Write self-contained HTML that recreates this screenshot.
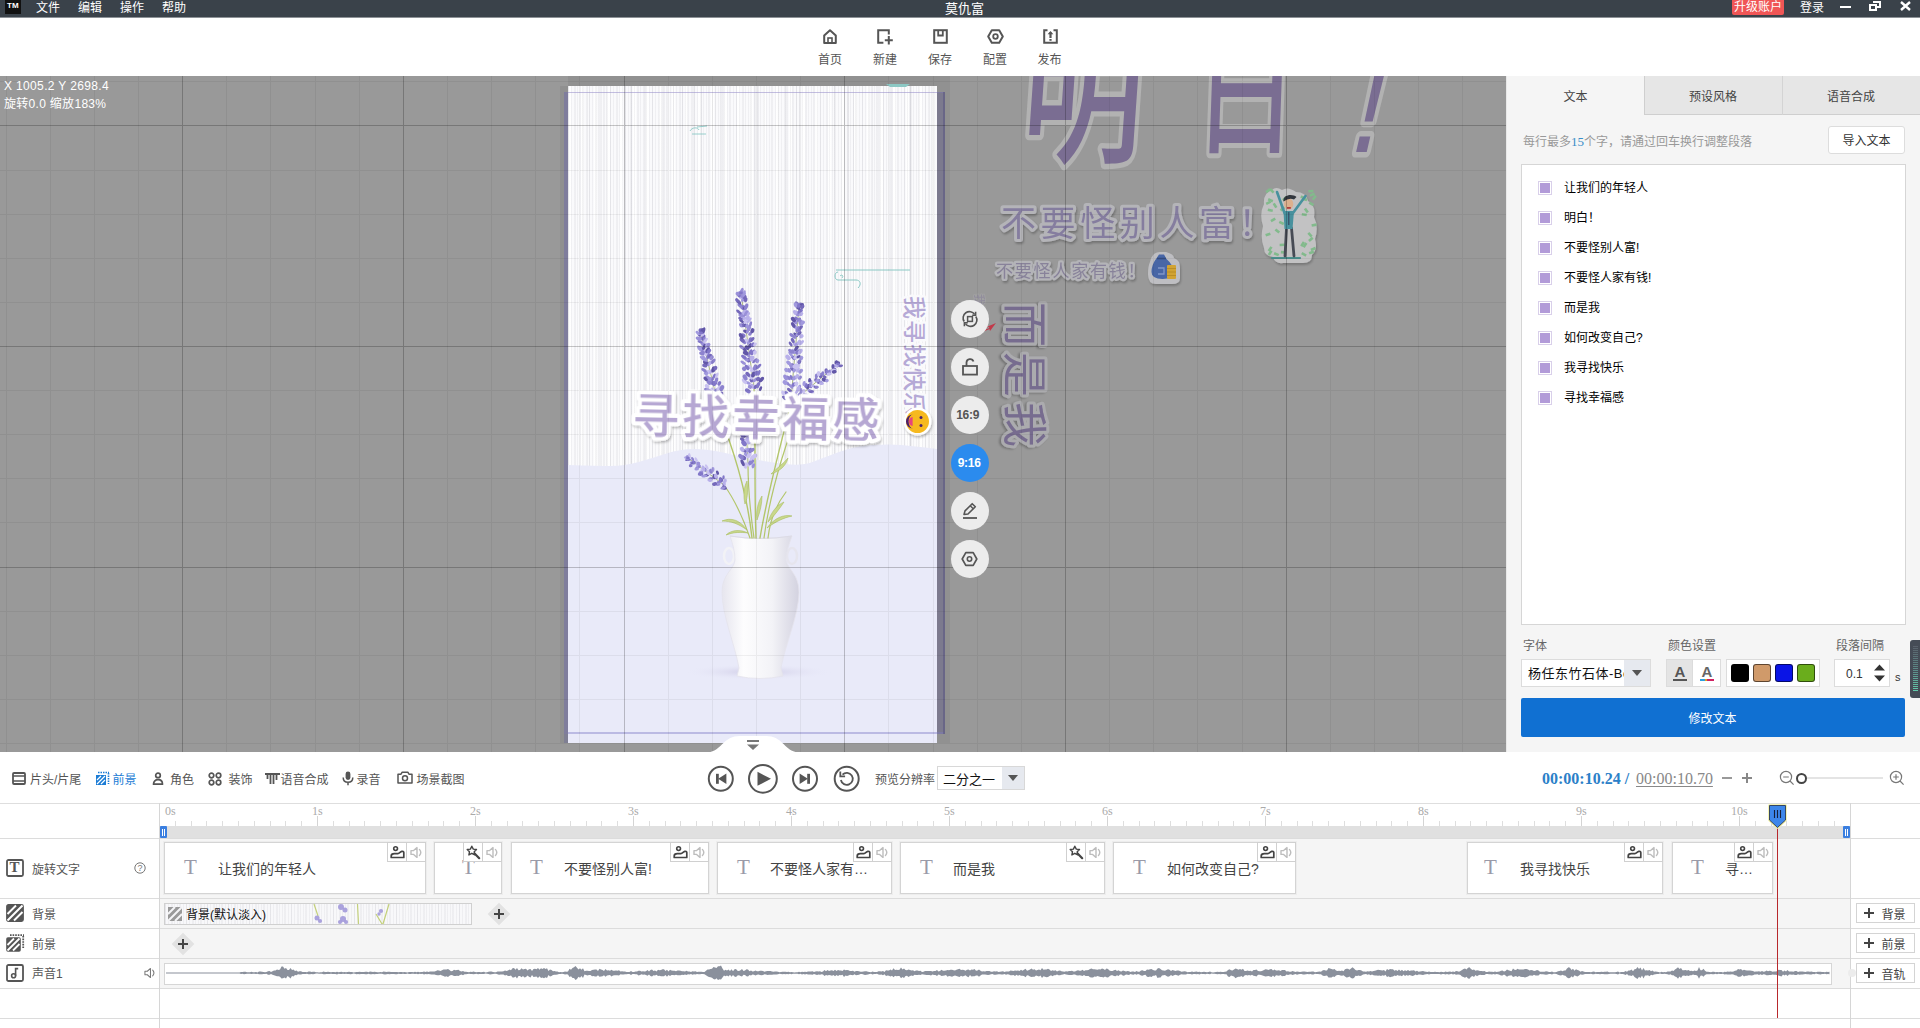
<!DOCTYPE html><html lang="zh"><head><meta charset="utf-8"><title>莫仇富</title><style>
*{box-sizing:border-box;margin:0;padding:0}
html,body{width:1920px;height:1028px;overflow:hidden;background:#fff}
body{position:relative;font-family:"Liberation Sans","Noto Sans CJK SC",sans-serif;font-size:12px;color:#555;line-height:1}
.abs{position:absolute}
.t{position:absolute;white-space:nowrap;line-height:1;margin-top:1px}
.t.serif,.t.lat{margin-top:0}
svg{position:absolute;overflow:visible}
#titlebar{position:absolute;left:0;top:0;width:1920px;height:18px;background:#3a424a;color:#fff;border-bottom:1px solid #8d9297}
#toolbar{position:absolute;left:0;top:17px;width:1920px;height:59px;background:linear-gradient(180deg,#8d9297 0 1px,#fff 1px)}
#canvas{position:absolute;left:0;top:76px;width:1506px;height:676px;background:#999;overflow:hidden}
#panel{position:absolute;left:1506px;top:76px;width:414px;height:676px;background:#f5f5f5}
#timeline{position:absolute;left:0;top:752px;width:1920px;height:276px;background:#fff}
.serif{font-family:"Liberation Serif","Noto Serif CJK SC",serif}
</style></head><body><div id="titlebar"><div class="abs" style="left:5px;top:0;width:16px;height:14px;background:#111"></div><div class="t lat" style="left:7px;top:2px;font-size:8px;font-weight:bold;color:#fff;letter-spacing:0">TM</div><div class="t" style="left:36px;top:1px;font-size:12px;color:#fff">文件</div><div class="t" style="left:78px;top:1px;font-size:12px;color:#fff">编辑</div><div class="t" style="left:120px;top:1px;font-size:12px;color:#fff">操作</div><div class="t" style="left:162px;top:1px;font-size:12px;color:#fff">帮助</div><div class="t" style="left:945px;top:1px;font-size:13px;color:#fff">莫仇富</div><div class="abs" style="left:1732px;top:0;width:52px;height:15px;background:#f05656;border-radius:0 0 2px 2px"></div><div class="t" style="left:1734px;top:0px;font-size:12px;color:#fff">升级账户</div><div class="t" style="left:1800px;top:1px;font-size:12px;color:#fff">登录</div><div class="abs" style="left:1840px;top:6px;width:11px;height:2px;background:#fff"></div><svg style="left:1869px;top:1px" width="12" height="10" viewBox="0 0 12 10"><path d="M4 1h7v5h-3" fill="none" stroke="#fff" stroke-width="2"/><rect x="1" y="4" width="6" height="5" fill="#3a424a" stroke="#fff" stroke-width="2"/></svg><svg style="left:1900px;top:1px" width="11" height="10" viewBox="0 0 11 10"><path d="M1 1l9 8M10 1l-9 8" stroke="#fff" stroke-width="2.4" fill="none"/></svg></div><div id="toolbar"><svg style="left:823px;top:12px" width="14" height="15" viewBox="0 0 14 15"><path d="M1.2 6.6L7 1.3l5.8 5.3V14H1.2z" fill="none" stroke="#555" stroke-width="2" stroke-linejoin="round"/><rect x="5" y="9" width="4" height="5" fill="none" stroke="#555" stroke-width="1.6"/></svg><svg style="left:877px;top:12px" width="16" height="15" viewBox="0 0 16 15"><path d="M6.4 13.8H1.2V1.2h10.6v4.2" fill="none" stroke="#555" stroke-width="2"/><path d="M11.8 7v8.4M7.8 11.2h8" stroke="#555" stroke-width="2" fill="none"/></svg><svg style="left:933px;top:12px" width="15" height="15" viewBox="0 0 15 15"><rect x="1.2" y="1.2" width="12.6" height="12.6" fill="none" stroke="#555" stroke-width="2"/><path d="M5.2 1.5v5h4.6v-5" fill="none" stroke="#555" stroke-width="1.8"/></svg><svg style="left:987px;top:12px" width="17" height="15" viewBox="0 0 17 15"><path d="M4.8 1.2h7.4l3.6 6.3-3.6 6.3H4.8L1.2 7.5z" fill="none" stroke="#555" stroke-width="2" stroke-linejoin="round"/><circle cx="8.5" cy="7.5" r="2.3" fill="none" stroke="#555" stroke-width="1.8"/></svg><svg style="left:1043px;top:12px" width="15" height="15" viewBox="0 0 15 15"><path d="M4.5 1.2H1.2v12.6h12.6V1.2h-3.3" fill="none" stroke="#555" stroke-width="2"/><path d="M7.5 9V3.2" stroke="#555" stroke-width="2.2"/><path d="M4.6 5.2L7.5 2l2.9 3.2z" fill="#555"/><rect x="6.4" y="10" width="2.2" height="1.8" fill="#555"/></svg><div class="t" style="left:818px;top:36px;font-size:12px;color:#555">首页</div><div class="t" style="left:873px;top:36px;font-size:12px;color:#555">新建</div><div class="t" style="left:928px;top:36px;font-size:12px;color:#555">保存</div><div class="t" style="left:983px;top:36px;font-size:12px;color:#555">配置</div><div class="t" style="left:1037.5px;top:36px;font-size:12px;color:#555">发布</div></div><div id="canvas"><div class="abs" style="left:560px;top:10px;width:8px;height:657px;background:rgba(0,0,0,0.06)"></div><div class="abs" style="left:568px;top:0;width:382px;height:10px;background:rgba(0,0,0,0.05)"></div><div class="abs" style="left:937px;top:10px;width:13px;height:657px;background:rgba(0,0,0,0.05)"></div><div class="abs" style="left:568px;top:10px;width:369px;height:657px;overflow:hidden;background-color:#fafafc;background-image:repeating-linear-gradient(90deg,rgba(60,60,80,0.055) 0 1px,transparent 1px 3px),repeating-linear-gradient(90deg,rgba(60,60,80,0.06) 0 1px,transparent 1px 7px),repeating-linear-gradient(90deg,rgba(255,255,255,0.9) 0 3px,transparent 3px 13px),repeating-linear-gradient(90deg,rgba(60,60,80,0.07) 0 1px,transparent 1px 19px),repeating-linear-gradient(90deg,rgba(60,60,80,0.05) 0 2px,transparent 2px 31px)"><svg style="left:0;top:0" width="369" height="657" viewBox="0 0 369 657"><path d="M0 379 Q30 380 43.0 380.0 Q56 380 70.5 376.0 Q85 372 98.5 367.5 Q112 363 126.0 363.0 Q140 363 155.0 366.5 Q170 370 185.0 373.0 Q200 376 217.0 378.0 Q234 380 244.5 376.0 Q255 372 271.0 366.0 Q287 360 304.5 359.0 Q322 358 333.5 359.0 Q345 360 357.0 361.5 L369 363 V657 H0Z" fill="#e9eaf9"/></svg></div><div class="abs" style="left:564px;top:16px;width:4px;height:642px;background:#7f7d9c"></div><div class="abs" style="left:568px;top:16px;width:376px;height:1px;background:rgba(150,140,200,0.55)"></div><div class="abs" style="left:568px;top:656px;width:376px;height:2px;background:rgba(150,145,210,0.55)"></div><div class="abs" style="left:937px;top:16px;width:8px;height:642px;background:rgba(100,95,140,0.45)"></div><div class="abs" style="left:943px;top:16px;width:2px;height:642px;background:rgba(90,85,130,0.55)"></div><div class="abs" style="left:564px;top:658px;width:4px;height:9px;background:rgba(110,110,150,0.5)"></div><svg style="left:0;top:0" width="1506" height="676" viewBox="0 76 1506 676"><defs><linearGradient id="vg" x1="0" x2="1" y1="0" y2="0"><stop offset="0" stop-color="#e6e5ee"/><stop offset="0.28" stop-color="#fdfdfe"/><stop offset="0.65" stop-color="#f3f3f7"/><stop offset="1" stop-color="#d3d2e0"/></linearGradient><radialGradient id="sh" cx="0.5" cy="0.5" r="0.5"><stop offset="0" stop-color="#c9c5e2" stop-opacity="0.9"/><stop offset="1" stop-color="#e9eaf9" stop-opacity="0"/></radialGradient></defs><ellipse cx="758" cy="672" rx="75" ry="8" fill="url(#sh)"/><ellipse cx="729" cy="556" rx="5" ry="8" fill="none" stroke="#f2f2f6" stroke-width="2.5"/><ellipse cx="792" cy="556" rx="5" ry="8" fill="none" stroke="#e6e5ee" stroke-width="2.5"/><path d="M730 536 Q760 541 792 536 C789 545 786 552 786 560 C788 570 799 574 799 592 C799 615 785 645 781 668 L783 676 Q760 681 737 676 L739 668 C735 645 722 615 722 592 C722 574 734 570 735 560 C735 552 733 545 730 536Z" fill="url(#vg)" stroke="#e4e3ec" stroke-width="0.8"/><path d="M730 536 Q760 541 792 536" fill="none" stroke="#dcdbe6" stroke-width="1"/></svg><svg style="left:0;top:0" width="1506" height="676" viewBox="0 76 1506 676"><path d="M752 538 C748 500 735 450 712 396" stroke="#b3c66a" stroke-width="1.4" fill="none" stroke-linecap="round"/><path d="M756 538 C754 480 756 430 754 388" stroke="#b3c66a" stroke-width="1.4" fill="none" stroke-linecap="round"/><path d="M760 538 C768 490 782 440 792 400" stroke="#b3c66a" stroke-width="1.4" fill="none" stroke-linecap="round"/><path d="M764 538 C770 490 790 430 804 394" stroke="#b3c66a" stroke-width="1.2" fill="none" stroke-linecap="round"/><path d="M754 538 C750 510 748 490 748 464" stroke="#b3c66a" stroke-width="1.2" fill="none" stroke-linecap="round"/><path d="M750 538 C742 515 735 500 724 485" stroke="#b3c66a" stroke-width="1.2" fill="none" stroke-linecap="round"/><path d="M768 538 C770 520 776 505 786 492" stroke="#b3c66a" stroke-width="1.2" fill="none" stroke-linecap="round"/><path d="M747 530 C740 520 731 517 722 521 C731 521 739 524 747 530Z" fill="#c9d88c" stroke="#a9bd62" stroke-width="0.6"/><path d="M748 533 C740 529 731 530 726 535 C734 532 741 532 748 533Z" fill="#c9d88c" stroke="#a9bd62" stroke-width="0.6"/><path d="M767 528 C774 518 784 514 792 516 C783 518 775 522 767 528Z" fill="#c9d88c" stroke="#a9bd62" stroke-width="0.6"/><path d="M768 522 C771 512 777 505 784 502 C780 508 775 515 768 522Z" fill="#c9d88c" stroke="#a9bd62" stroke-width="0.6"/><path d="M771 474 C777 468 783 464 788 458 C786 466 780 471 771 474Z" fill="#c9d88c" stroke="#a9bd62" stroke-width="0.6"/><path d="M745 504 C743 495 744 487 747 481 C748 489 748 497 745 504Z" fill="#c9d88c" stroke="#a9bd62" stroke-width="0.6"/><path d="M757 520 C756 510 758 502 762 496 C762 504 760 512 757 520Z" fill="#c9d88c" stroke="#a9bd62" stroke-width="0.6"/><path d="M716.0 396.0L701.0 333.0" stroke="#9aa96a" stroke-width="0.8" fill="none"/><ellipse cx="715.0" cy="398.0" rx="3.0" ry="1.4" fill="#b8b0ea" transform="rotate(-145 715.0 398.0)"/><ellipse cx="712.5" cy="394.8" rx="2.4" ry="1.4" fill="#6257a8" transform="rotate(-140 712.5 394.8)"/><ellipse cx="710.9" cy="397.7" rx="3.2" ry="1.5" fill="#7569bb" transform="rotate(-132 710.9 397.7)"/><ellipse cx="717.1" cy="396.2" rx="3.4" ry="1.4" fill="#8277c9" transform="rotate(-49 717.1 396.2)"/><ellipse cx="719.5" cy="395.0" rx="2.9" ry="1.8" fill="#8d83cf" transform="rotate(-56 719.5 395.0)"/><ellipse cx="721.5" cy="394.0" rx="2.6" ry="1.8" fill="#7569bb" transform="rotate(-81 721.5 394.0)"/><ellipse cx="712.8" cy="390.1" rx="2.8" ry="2.0" fill="#c9c2f0" transform="rotate(-142 712.8 390.1)"/><ellipse cx="710.2" cy="392.0" rx="2.4" ry="2.0" fill="#8277c9" transform="rotate(-127 710.2 392.0)"/><ellipse cx="707.1" cy="389.6" rx="3.1" ry="1.6" fill="#8d83cf" transform="rotate(-163 707.1 389.6)"/><ellipse cx="716.0" cy="391.0" rx="2.6" ry="2.1" fill="#8d83cf" transform="rotate(-67 716.0 391.0)"/><ellipse cx="718.7" cy="388.3" rx="3.3" ry="1.6" fill="#c9c2f0" transform="rotate(-56 718.7 388.3)"/><ellipse cx="721.8" cy="388.2" rx="3.2" ry="2.1" fill="#8d83cf" transform="rotate(-64 721.8 388.2)"/><ellipse cx="712.3" cy="382.7" rx="3.0" ry="2.2" fill="#8277c9" transform="rotate(-156 712.3 382.7)"/><ellipse cx="709.1" cy="382.4" rx="2.6" ry="2.1" fill="#8d83cf" transform="rotate(-138 709.1 382.4)"/><ellipse cx="707.0" cy="386.2" rx="2.5" ry="1.9" fill="#c9c2f0" transform="rotate(-139 707.0 386.2)"/><ellipse cx="714.7" cy="383.4" rx="2.9" ry="2.1" fill="#8277c9" transform="rotate(-51 714.7 383.4)"/><ellipse cx="716.4" cy="380.2" rx="3.0" ry="1.7" fill="#8d83cf" transform="rotate(-74 716.4 380.2)"/><ellipse cx="719.3" cy="383.3" rx="2.5" ry="1.7" fill="#8277c9" transform="rotate(-60 719.3 383.3)"/><ellipse cx="710.5" cy="379.1" rx="2.8" ry="1.8" fill="#a199de" transform="rotate(-136 710.5 379.1)"/><ellipse cx="707.7" cy="377.9" rx="2.9" ry="1.9" fill="#9a90d8" transform="rotate(-126 707.7 377.9)"/><ellipse cx="705.7" cy="379.0" rx="2.8" ry="1.7" fill="#6257a8" transform="rotate(-131 705.7 379.0)"/><ellipse cx="712.8" cy="378.7" rx="2.9" ry="1.4" fill="#8d83cf" transform="rotate(-61 712.8 378.7)"/><ellipse cx="714.5" cy="375.7" rx="2.2" ry="1.5" fill="#8277c9" transform="rotate(-68 714.5 375.7)"/><ellipse cx="716.9" cy="375.2" rx="2.8" ry="1.4" fill="#c9c2f0" transform="rotate(-64 716.9 375.2)"/><ellipse cx="708.8" cy="372.0" rx="2.3" ry="2.0" fill="#c9c2f0" transform="rotate(-153 708.8 372.0)"/><ellipse cx="706.1" cy="373.3" rx="2.2" ry="2.1" fill="#a199de" transform="rotate(-145 706.1 373.3)"/><ellipse cx="704.0" cy="370.2" rx="3.1" ry="1.6" fill="#8d83cf" transform="rotate(-149 704.0 370.2)"/><ellipse cx="711.0" cy="371.7" rx="2.6" ry="1.5" fill="#b8b0ea" transform="rotate(-53 711.0 371.7)"/><ellipse cx="713.4" cy="369.4" rx="3.2" ry="2.0" fill="#6257a8" transform="rotate(-76 713.4 369.4)"/><ellipse cx="715.5" cy="368.2" rx="2.4" ry="1.8" fill="#7569bb" transform="rotate(-69 715.5 368.2)"/><ellipse cx="707.0" cy="363.3" rx="2.8" ry="1.5" fill="#b8b0ea" transform="rotate(-148 707.0 363.3)"/><ellipse cx="706.0" cy="363.0" rx="3.4" ry="2.1" fill="#6257a8" transform="rotate(-138 706.0 363.0)"/><ellipse cx="704.7" cy="365.7" rx="2.6" ry="1.7" fill="#7569bb" transform="rotate(-163 704.7 365.7)"/><ellipse cx="709.4" cy="363.5" rx="3.2" ry="1.4" fill="#9a90d8" transform="rotate(-57 709.4 363.5)"/><ellipse cx="710.7" cy="362.7" rx="2.8" ry="1.5" fill="#b8b0ea" transform="rotate(-52 710.7 362.7)"/><ellipse cx="713.2" cy="361.3" rx="3.1" ry="1.7" fill="#8d83cf" transform="rotate(-54 713.2 361.3)"/><ellipse cx="705.7" cy="360.1" rx="2.3" ry="1.5" fill="#a199de" transform="rotate(-160 705.7 360.1)"/><ellipse cx="703.8" cy="358.5" rx="2.8" ry="2.1" fill="#a199de" transform="rotate(-130 703.8 358.5)"/><ellipse cx="702.5" cy="358.0" rx="3.1" ry="1.4" fill="#a199de" transform="rotate(-153 702.5 358.0)"/><ellipse cx="708.1" cy="356.1" rx="3.2" ry="1.5" fill="#8277c9" transform="rotate(-73 708.1 356.1)"/><ellipse cx="710.1" cy="356.2" rx="2.6" ry="1.8" fill="#7569bb" transform="rotate(-50 710.1 356.2)"/><ellipse cx="711.6" cy="357.7" rx="2.7" ry="1.8" fill="#9a90d8" transform="rotate(-47 711.6 357.7)"/><ellipse cx="704.4" cy="350.2" rx="2.3" ry="1.5" fill="#c9c2f0" transform="rotate(-144 704.4 350.2)"/><ellipse cx="703.0" cy="351.9" rx="3.1" ry="1.5" fill="#8d83cf" transform="rotate(-129 703.0 351.9)"/><ellipse cx="701.8" cy="353.6" rx="2.8" ry="1.8" fill="#8d83cf" transform="rotate(-155 701.8 353.6)"/><ellipse cx="705.8" cy="353.9" rx="2.4" ry="1.4" fill="#c9c2f0" transform="rotate(-79 705.8 353.9)"/><ellipse cx="707.6" cy="350.1" rx="3.3" ry="1.7" fill="#6257a8" transform="rotate(-59 707.6 350.1)"/><ellipse cx="708.9" cy="351.3" rx="2.8" ry="1.7" fill="#8277c9" transform="rotate(-46 708.9 351.3)"/><ellipse cx="702.7" cy="343.9" rx="2.4" ry="1.7" fill="#9a90d8" transform="rotate(-140 702.7 343.9)"/><ellipse cx="701.7" cy="348.2" rx="2.5" ry="1.4" fill="#8d83cf" transform="rotate(-150 701.7 348.2)"/><ellipse cx="699.6" cy="348.2" rx="3.1" ry="1.9" fill="#a199de" transform="rotate(-129 699.6 348.2)"/><ellipse cx="704.3" cy="346.8" rx="3.4" ry="1.7" fill="#6257a8" transform="rotate(-64 704.3 346.8)"/><ellipse cx="706.8" cy="345.4" rx="2.8" ry="1.6" fill="#b8b0ea" transform="rotate(-76 706.8 345.4)"/><ellipse cx="708.4" cy="345.3" rx="2.6" ry="1.7" fill="#9a90d8" transform="rotate(-55 708.4 345.3)"/><ellipse cx="702.0" cy="338.9" rx="2.8" ry="1.4" fill="#6257a8" transform="rotate(-163 702.0 338.9)"/><ellipse cx="699.9" cy="341.7" rx="2.5" ry="1.4" fill="#8277c9" transform="rotate(-155 699.9 341.7)"/><ellipse cx="698.8" cy="338.6" rx="3.2" ry="1.9" fill="#9a90d8" transform="rotate(-161 698.8 338.6)"/><ellipse cx="703.6" cy="337.1" rx="2.9" ry="1.9" fill="#7569bb" transform="rotate(-80 703.6 337.1)"/><ellipse cx="704.2" cy="340.4" rx="3.3" ry="1.6" fill="#8d83cf" transform="rotate(-83 704.2 340.4)"/><ellipse cx="705.5" cy="340.5" rx="3.2" ry="1.4" fill="#c9c2f0" transform="rotate(-49 705.5 340.5)"/><ellipse cx="701.0" cy="330.7" rx="2.7" ry="2.1" fill="#7569bb" transform="rotate(-148 701.0 330.7)"/><ellipse cx="699.4" cy="334.6" rx="2.3" ry="1.5" fill="#6257a8" transform="rotate(-125 699.4 334.6)"/><ellipse cx="697.9" cy="333.0" rx="2.8" ry="1.5" fill="#a199de" transform="rotate(-141 697.9 333.0)"/><ellipse cx="701.8" cy="331.4" rx="3.4" ry="1.4" fill="#6257a8" transform="rotate(-83 701.8 331.4)"/><ellipse cx="702.6" cy="333.9" rx="2.7" ry="1.9" fill="#c9c2f0" transform="rotate(-57 702.6 333.9)"/><ellipse cx="703.6" cy="330.5" rx="3.4" ry="1.6" fill="#6257a8" transform="rotate(-75 703.6 330.5)"/><ellipse cx="701.0" cy="333.0" rx="2.0" ry="1.4" fill="#8277c9"/><path d="M754.0 388.0L741.0 293.0" stroke="#9aa96a" stroke-width="0.8" fill="none"/><ellipse cx="752.8" cy="386.5" rx="3.1" ry="1.9" fill="#b8b0ea" transform="rotate(-134 752.8 386.5)"/><ellipse cx="749.9" cy="386.9" rx="2.2" ry="1.9" fill="#9a90d8" transform="rotate(-153 749.9 386.9)"/><ellipse cx="747.9" cy="390.9" rx="3.2" ry="2.1" fill="#8277c9" transform="rotate(-145 747.9 390.9)"/><ellipse cx="755.3" cy="386.9" rx="2.2" ry="1.5" fill="#7569bb" transform="rotate(-67 755.3 386.9)"/><ellipse cx="758.0" cy="385.2" rx="3.4" ry="1.8" fill="#8277c9" transform="rotate(-68 758.0 385.2)"/><ellipse cx="760.5" cy="388.7" rx="2.6" ry="1.4" fill="#6257a8" transform="rotate(-67 760.5 388.7)"/><ellipse cx="751.5" cy="380.1" rx="2.3" ry="2.0" fill="#7569bb" transform="rotate(-124 751.5 380.1)"/><ellipse cx="748.0" cy="382.9" rx="3.0" ry="1.4" fill="#a199de" transform="rotate(-156 748.0 382.9)"/><ellipse cx="744.4" cy="381.3" rx="3.3" ry="1.7" fill="#c9c2f0" transform="rotate(-131 744.4 381.3)"/><ellipse cx="755.1" cy="379.9" rx="3.0" ry="1.4" fill="#9a90d8" transform="rotate(-44 755.1 379.9)"/><ellipse cx="758.1" cy="379.0" rx="2.3" ry="1.8" fill="#7569bb" transform="rotate(-58 758.1 379.0)"/><ellipse cx="761.4" cy="379.6" rx="3.3" ry="1.9" fill="#6257a8" transform="rotate(-50 761.4 379.6)"/><ellipse cx="751.0" cy="376.9" rx="3.0" ry="2.1" fill="#c9c2f0" transform="rotate(-133 751.0 376.9)"/><ellipse cx="747.8" cy="374.4" rx="2.9" ry="1.9" fill="#7569bb" transform="rotate(-137 747.8 374.4)"/><ellipse cx="745.1" cy="377.5" rx="3.3" ry="2.1" fill="#8d83cf" transform="rotate(-121 745.1 377.5)"/><ellipse cx="753.4" cy="374.4" rx="3.2" ry="2.0" fill="#6257a8" transform="rotate(-68 753.4 374.4)"/><ellipse cx="756.6" cy="373.1" rx="2.7" ry="2.0" fill="#8277c9" transform="rotate(-75 756.6 373.1)"/><ellipse cx="759.0" cy="372.9" rx="3.0" ry="1.4" fill="#8277c9" transform="rotate(-72 759.0 372.9)"/><ellipse cx="749.6" cy="366.9" rx="2.9" ry="1.5" fill="#c9c2f0" transform="rotate(-137 749.6 366.9)"/><ellipse cx="747.1" cy="367.4" rx="3.0" ry="1.9" fill="#8277c9" transform="rotate(-129 747.1 367.4)"/><ellipse cx="744.1" cy="368.8" rx="2.3" ry="2.1" fill="#8d83cf" transform="rotate(-126 744.1 368.8)"/><ellipse cx="752.4" cy="369.8" rx="2.7" ry="2.0" fill="#c9c2f0" transform="rotate(-39 752.4 369.8)"/><ellipse cx="755.2" cy="367.6" rx="3.3" ry="2.1" fill="#8d83cf" transform="rotate(-75 755.2 367.6)"/><ellipse cx="758.6" cy="366.5" rx="3.4" ry="1.5" fill="#8277c9" transform="rotate(-45 758.6 366.5)"/><ellipse cx="748.5" cy="360.1" rx="2.5" ry="2.1" fill="#7569bb" transform="rotate(-137 748.5 360.1)"/><ellipse cx="746.2" cy="359.2" rx="3.0" ry="1.7" fill="#9a90d8" transform="rotate(-147 746.2 359.2)"/><ellipse cx="743.2" cy="362.8" rx="3.2" ry="1.4" fill="#9a90d8" transform="rotate(-148 743.2 362.8)"/><ellipse cx="752.0" cy="358.5" rx="3.1" ry="2.1" fill="#b8b0ea" transform="rotate(-66 752.0 358.5)"/><ellipse cx="754.9" cy="360.8" rx="3.3" ry="1.4" fill="#8277c9" transform="rotate(-41 754.9 360.8)"/><ellipse cx="757.3" cy="361.0" rx="2.2" ry="1.9" fill="#a199de" transform="rotate(-52 757.3 361.0)"/><ellipse cx="748.4" cy="355.4" rx="2.8" ry="1.5" fill="#9a90d8" transform="rotate(-133 748.4 355.4)"/><ellipse cx="745.8" cy="353.0" rx="3.0" ry="2.1" fill="#6257a8" transform="rotate(-155 745.8 353.0)"/><ellipse cx="743.8" cy="357.0" rx="3.1" ry="1.7" fill="#8277c9" transform="rotate(-148 743.8 357.0)"/><ellipse cx="750.5" cy="351.9" rx="2.9" ry="1.5" fill="#8277c9" transform="rotate(-61 750.5 351.9)"/><ellipse cx="752.8" cy="352.4" rx="3.4" ry="1.6" fill="#8277c9" transform="rotate(-52 752.8 352.4)"/><ellipse cx="754.8" cy="352.5" rx="2.3" ry="1.9" fill="#c9c2f0" transform="rotate(-75 754.8 352.5)"/><ellipse cx="747.0" cy="347.7" rx="2.6" ry="2.0" fill="#6257a8" transform="rotate(-135 747.0 347.7)"/><ellipse cx="744.5" cy="349.5" rx="2.9" ry="1.6" fill="#6257a8" transform="rotate(-133 744.5 349.5)"/><ellipse cx="741.5" cy="347.0" rx="2.7" ry="1.7" fill="#9a90d8" transform="rotate(-139 741.5 347.0)"/><ellipse cx="750.0" cy="345.8" rx="2.8" ry="1.8" fill="#6257a8" transform="rotate(-63 750.0 345.8)"/><ellipse cx="752.8" cy="344.8" rx="2.6" ry="1.9" fill="#8277c9" transform="rotate(-61 752.8 344.8)"/><ellipse cx="754.9" cy="344.5" rx="2.2" ry="1.4" fill="#c9c2f0" transform="rotate(-49 754.9 344.5)"/><ellipse cx="746.1" cy="340.7" rx="2.3" ry="2.1" fill="#c9c2f0" transform="rotate(-155 746.1 340.7)"/><ellipse cx="744.1" cy="342.2" rx="2.3" ry="1.5" fill="#8d83cf" transform="rotate(-139 744.1 342.2)"/><ellipse cx="742.2" cy="340.1" rx="3.0" ry="2.0" fill="#7569bb" transform="rotate(-136 742.2 340.1)"/><ellipse cx="748.9" cy="342.2" rx="2.9" ry="1.4" fill="#a199de" transform="rotate(-49 748.9 342.2)"/><ellipse cx="750.5" cy="339.9" rx="2.7" ry="2.0" fill="#8277c9" transform="rotate(-74 750.5 339.9)"/><ellipse cx="752.5" cy="339.4" rx="2.6" ry="1.5" fill="#7569bb" transform="rotate(-54 752.5 339.4)"/><ellipse cx="745.4" cy="331.4" rx="2.5" ry="1.6" fill="#6257a8" transform="rotate(-151 745.4 331.4)"/><ellipse cx="743.2" cy="335.5" rx="2.5" ry="2.1" fill="#8277c9" transform="rotate(-146 743.2 335.5)"/><ellipse cx="741.2" cy="336.0" rx="3.3" ry="1.9" fill="#6257a8" transform="rotate(-121 741.2 336.0)"/><ellipse cx="747.6" cy="331.4" rx="2.4" ry="1.4" fill="#9a90d8" transform="rotate(-64 747.6 331.4)"/><ellipse cx="750.1" cy="333.8" rx="2.2" ry="1.6" fill="#8d83cf" transform="rotate(-44 750.1 333.8)"/><ellipse cx="752.4" cy="330.6" rx="2.6" ry="2.0" fill="#6257a8" transform="rotate(-69 752.4 330.6)"/><ellipse cx="744.7" cy="325.1" rx="2.3" ry="1.9" fill="#6257a8" transform="rotate(-142 744.7 325.1)"/><ellipse cx="742.5" cy="325.3" rx="2.2" ry="1.8" fill="#7569bb" transform="rotate(-155 742.5 325.3)"/><ellipse cx="740.7" cy="325.3" rx="2.3" ry="1.4" fill="#9a90d8" transform="rotate(-120 740.7 325.3)"/><ellipse cx="746.8" cy="325.7" rx="2.6" ry="1.4" fill="#a199de" transform="rotate(-75 746.8 325.7)"/><ellipse cx="748.9" cy="328.1" rx="3.3" ry="2.0" fill="#9a90d8" transform="rotate(-77 748.9 328.1)"/><ellipse cx="750.6" cy="323.8" rx="2.7" ry="1.4" fill="#8d83cf" transform="rotate(-75 750.6 323.8)"/><ellipse cx="743.9" cy="318.0" rx="2.3" ry="2.1" fill="#b8b0ea" transform="rotate(-126 743.9 318.0)"/><ellipse cx="742.0" cy="321.4" rx="3.2" ry="1.4" fill="#6257a8" transform="rotate(-146 742.0 321.4)"/><ellipse cx="740.5" cy="318.6" rx="2.4" ry="1.6" fill="#7569bb" transform="rotate(-154 740.5 318.6)"/><ellipse cx="745.5" cy="321.3" rx="2.9" ry="1.7" fill="#c9c2f0" transform="rotate(-63 745.5 321.3)"/><ellipse cx="747.6" cy="317.7" rx="2.5" ry="2.0" fill="#b8b0ea" transform="rotate(-42 747.6 317.7)"/><ellipse cx="749.1" cy="320.4" rx="3.4" ry="1.4" fill="#b8b0ea" transform="rotate(-48 749.1 320.4)"/><ellipse cx="742.5" cy="314.5" rx="3.1" ry="1.8" fill="#8d83cf" transform="rotate(-150 742.5 314.5)"/><ellipse cx="741.2" cy="315.1" rx="2.8" ry="2.1" fill="#9a90d8" transform="rotate(-156 741.2 315.1)"/><ellipse cx="738.8" cy="312.0" rx="3.2" ry="1.5" fill="#7569bb" transform="rotate(-138 738.8 312.0)"/><ellipse cx="744.6" cy="312.0" rx="3.2" ry="2.0" fill="#b8b0ea" transform="rotate(-54 744.6 312.0)"/><ellipse cx="746.4" cy="313.2" rx="3.1" ry="1.8" fill="#9a90d8" transform="rotate(-57 746.4 313.2)"/><ellipse cx="748.4" cy="314.0" rx="2.2" ry="1.4" fill="#b8b0ea" transform="rotate(-56 748.4 314.0)"/><ellipse cx="742.4" cy="307.0" rx="2.3" ry="1.4" fill="#6257a8" transform="rotate(-143 742.4 307.0)"/><ellipse cx="741.2" cy="306.8" rx="3.1" ry="1.7" fill="#9a90d8" transform="rotate(-127 741.2 306.8)"/><ellipse cx="739.7" cy="305.1" rx="2.5" ry="1.8" fill="#8d83cf" transform="rotate(-149 739.7 305.1)"/><ellipse cx="743.3" cy="307.5" rx="2.5" ry="1.6" fill="#8277c9" transform="rotate(-68 743.3 307.5)"/><ellipse cx="745.0" cy="307.6" rx="2.5" ry="1.5" fill="#6257a8" transform="rotate(-42 745.0 307.6)"/><ellipse cx="746.2" cy="306.6" rx="3.4" ry="1.8" fill="#8d83cf" transform="rotate(-69 746.2 306.6)"/><ellipse cx="741.0" cy="297.5" rx="2.3" ry="1.7" fill="#c9c2f0" transform="rotate(-151 741.0 297.5)"/><ellipse cx="739.3" cy="302.4" rx="2.5" ry="1.4" fill="#6257a8" transform="rotate(-125 739.3 302.4)"/><ellipse cx="737.7" cy="301.0" rx="3.3" ry="1.7" fill="#7569bb" transform="rotate(-128 737.7 301.0)"/><ellipse cx="743.0" cy="299.2" rx="2.9" ry="1.5" fill="#a199de" transform="rotate(-63 743.0 299.2)"/><ellipse cx="744.6" cy="297.0" rx="2.2" ry="1.9" fill="#7569bb" transform="rotate(-41 744.6 297.0)"/><ellipse cx="745.6" cy="299.7" rx="2.6" ry="1.9" fill="#7569bb" transform="rotate(-75 745.6 299.7)"/><ellipse cx="740.1" cy="292.9" rx="2.2" ry="1.4" fill="#a199de" transform="rotate(-134 740.1 292.9)"/><ellipse cx="739.0" cy="295.3" rx="2.4" ry="1.9" fill="#8277c9" transform="rotate(-134 739.0 295.3)"/><ellipse cx="737.7" cy="293.8" rx="2.2" ry="2.0" fill="#9a90d8" transform="rotate(-153 737.7 293.8)"/><ellipse cx="741.7" cy="291.1" rx="3.4" ry="1.6" fill="#9a90d8" transform="rotate(-70 741.7 291.1)"/><ellipse cx="743.1" cy="295.2" rx="3.3" ry="1.7" fill="#9a90d8" transform="rotate(-45 743.1 295.2)"/><ellipse cx="744.1" cy="293.2" rx="3.1" ry="1.5" fill="#a199de" transform="rotate(-76 744.1 293.2)"/><ellipse cx="741.0" cy="293.0" rx="2.0" ry="1.4" fill="#8277c9"/><path d="M791.0 400.0L799.0 306.0" stroke="#9aa96a" stroke-width="0.8" fill="none"/><ellipse cx="789.7" cy="397.8" rx="2.3" ry="1.9" fill="#a199de" transform="rotate(-120 789.7 397.8)"/><ellipse cx="787.0" cy="400.8" rx="2.8" ry="2.1" fill="#c9c2f0" transform="rotate(-109 787.0 400.8)"/><ellipse cx="784.7" cy="398.0" rx="3.2" ry="1.6" fill="#7569bb" transform="rotate(-139 784.7 398.0)"/><ellipse cx="792.5" cy="400.2" rx="2.2" ry="2.1" fill="#a199de" transform="rotate(-50 792.5 400.2)"/><ellipse cx="794.9" cy="398.6" rx="2.9" ry="1.8" fill="#c9c2f0" transform="rotate(-57 794.9 398.6)"/><ellipse cx="797.2" cy="401.9" rx="2.7" ry="1.8" fill="#8d83cf" transform="rotate(-50 797.2 401.9)"/><ellipse cx="789.7" cy="390.3" rx="3.2" ry="1.5" fill="#7569bb" transform="rotate(-140 789.7 390.3)"/><ellipse cx="786.5" cy="393.2" rx="2.7" ry="1.7" fill="#8277c9" transform="rotate(-139 786.5 393.2)"/><ellipse cx="783.1" cy="393.0" rx="2.5" ry="1.7" fill="#c9c2f0" transform="rotate(-120 783.1 393.0)"/><ellipse cx="793.3" cy="395.4" rx="3.4" ry="1.7" fill="#c9c2f0" transform="rotate(-47 793.3 395.4)"/><ellipse cx="796.9" cy="391.7" rx="2.7" ry="1.4" fill="#b8b0ea" transform="rotate(-51 796.9 391.7)"/><ellipse cx="800.0" cy="393.8" rx="2.8" ry="1.4" fill="#8d83cf" transform="rotate(-40 800.0 393.8)"/><ellipse cx="790.9" cy="386.3" rx="3.1" ry="1.4" fill="#9a90d8" transform="rotate(-135 790.9 386.3)"/><ellipse cx="788.0" cy="383.8" rx="2.2" ry="1.4" fill="#8d83cf" transform="rotate(-130 788.0 383.8)"/><ellipse cx="785.1" cy="382.5" rx="2.8" ry="2.1" fill="#a199de" transform="rotate(-142 785.1 382.5)"/><ellipse cx="793.8" cy="384.6" rx="2.4" ry="2.0" fill="#8277c9" transform="rotate(-41 793.8 384.6)"/><ellipse cx="796.3" cy="383.9" rx="2.5" ry="2.0" fill="#c9c2f0" transform="rotate(-59 796.3 383.9)"/><ellipse cx="799.2" cy="387.3" rx="2.8" ry="1.6" fill="#a199de" transform="rotate(-64 799.2 387.3)"/><ellipse cx="791.3" cy="377.5" rx="2.5" ry="1.6" fill="#8277c9" transform="rotate(-120 791.3 377.5)"/><ellipse cx="788.4" cy="377.8" rx="3.0" ry="1.6" fill="#8d83cf" transform="rotate(-140 788.4 377.8)"/><ellipse cx="785.6" cy="377.5" rx="3.2" ry="1.9" fill="#9a90d8" transform="rotate(-120 785.6 377.5)"/><ellipse cx="794.5" cy="378.0" rx="2.6" ry="2.0" fill="#a199de" transform="rotate(-47 794.5 378.0)"/><ellipse cx="797.2" cy="376.4" rx="2.5" ry="1.8" fill="#b8b0ea" transform="rotate(-53 797.2 376.4)"/><ellipse cx="800.0" cy="377.7" rx="2.4" ry="1.6" fill="#9a90d8" transform="rotate(-40 800.0 377.7)"/><ellipse cx="792.0" cy="369.0" rx="2.3" ry="1.5" fill="#7569bb" transform="rotate(-131 792.0 369.0)"/><ellipse cx="789.0" cy="370.4" rx="2.5" ry="1.8" fill="#9a90d8" transform="rotate(-127 789.0 370.4)"/><ellipse cx="786.3" cy="370.0" rx="2.4" ry="1.9" fill="#a199de" transform="rotate(-124 786.3 370.0)"/><ellipse cx="794.7" cy="369.7" rx="3.1" ry="1.7" fill="#a199de" transform="rotate(-63 794.7 369.7)"/><ellipse cx="797.9" cy="370.0" rx="2.7" ry="1.6" fill="#b8b0ea" transform="rotate(-65 797.9 370.0)"/><ellipse cx="800.7" cy="371.3" rx="2.9" ry="1.8" fill="#a199de" transform="rotate(-45 800.7 371.3)"/><ellipse cx="793.1" cy="366.0" rx="2.8" ry="1.7" fill="#7569bb" transform="rotate(-115 793.1 366.0)"/><ellipse cx="791.0" cy="365.5" rx="2.9" ry="1.9" fill="#9a90d8" transform="rotate(-113 791.0 365.5)"/><ellipse cx="788.6" cy="362.9" rx="2.8" ry="1.9" fill="#a199de" transform="rotate(-138 788.6 362.9)"/><ellipse cx="795.2" cy="366.1" rx="2.9" ry="2.2" fill="#c9c2f0" transform="rotate(-36 795.2 366.1)"/><ellipse cx="797.4" cy="366.6" rx="3.2" ry="2.0" fill="#c9c2f0" transform="rotate(-47 797.4 366.6)"/><ellipse cx="799.3" cy="361.8" rx="2.5" ry="1.9" fill="#8277c9" transform="rotate(-60 799.3 361.8)"/><ellipse cx="793.4" cy="357.7" rx="2.9" ry="1.7" fill="#8277c9" transform="rotate(-137 793.4 357.7)"/><ellipse cx="790.6" cy="354.1" rx="3.3" ry="1.4" fill="#a199de" transform="rotate(-125 790.6 354.1)"/><ellipse cx="788.0" cy="357.4" rx="3.1" ry="2.1" fill="#b8b0ea" transform="rotate(-135 788.0 357.4)"/><ellipse cx="795.9" cy="357.3" rx="2.9" ry="1.7" fill="#c9c2f0" transform="rotate(-31 795.9 357.3)"/><ellipse cx="798.6" cy="356.8" rx="2.2" ry="1.4" fill="#6257a8" transform="rotate(-27 798.6 356.8)"/><ellipse cx="801.3" cy="358.1" rx="2.4" ry="1.9" fill="#a199de" transform="rotate(-62 801.3 358.1)"/><ellipse cx="794.1" cy="351.7" rx="2.3" ry="2.1" fill="#a199de" transform="rotate(-119 794.1 351.7)"/><ellipse cx="792.4" cy="351.5" rx="2.3" ry="1.9" fill="#8d83cf" transform="rotate(-107 792.4 351.5)"/><ellipse cx="790.5" cy="351.1" rx="2.9" ry="1.6" fill="#8d83cf" transform="rotate(-138 790.5 351.1)"/><ellipse cx="796.5" cy="348.2" rx="3.1" ry="1.7" fill="#6257a8" transform="rotate(-55 796.5 348.2)"/><ellipse cx="798.1" cy="352.0" rx="3.2" ry="2.0" fill="#8277c9" transform="rotate(-40 798.1 352.0)"/><ellipse cx="800.2" cy="351.6" rx="3.2" ry="1.9" fill="#b8b0ea" transform="rotate(-53 800.2 351.6)"/><ellipse cx="794.8" cy="344.4" rx="2.5" ry="1.6" fill="#b8b0ea" transform="rotate(-134 794.8 344.4)"/><ellipse cx="792.8" cy="340.5" rx="2.9" ry="1.7" fill="#7569bb" transform="rotate(-117 792.8 340.5)"/><ellipse cx="790.6" cy="344.0" rx="2.8" ry="1.4" fill="#7569bb" transform="rotate(-124 790.6 344.0)"/><ellipse cx="797.1" cy="343.7" rx="3.2" ry="1.4" fill="#a199de" transform="rotate(-32 797.1 343.7)"/><ellipse cx="799.2" cy="342.3" rx="2.5" ry="2.0" fill="#b8b0ea" transform="rotate(-63 799.2 342.3)"/><ellipse cx="801.4" cy="342.7" rx="3.2" ry="1.5" fill="#b8b0ea" transform="rotate(-45 801.4 342.7)"/><ellipse cx="795.7" cy="334.8" rx="2.9" ry="1.5" fill="#6257a8" transform="rotate(-138 795.7 334.8)"/><ellipse cx="793.6" cy="336.6" rx="3.0" ry="1.4" fill="#8d83cf" transform="rotate(-137 793.6 336.6)"/><ellipse cx="791.7" cy="335.2" rx="2.7" ry="1.7" fill="#8d83cf" transform="rotate(-141 791.7 335.2)"/><ellipse cx="797.5" cy="334.3" rx="2.6" ry="1.6" fill="#a199de" transform="rotate(-48 797.5 334.3)"/><ellipse cx="799.5" cy="333.3" rx="2.5" ry="1.7" fill="#7569bb" transform="rotate(-44 799.5 333.3)"/><ellipse cx="801.4" cy="336.2" rx="2.4" ry="2.0" fill="#b8b0ea" transform="rotate(-39 801.4 336.2)"/><ellipse cx="796.2" cy="327.9" rx="3.1" ry="1.8" fill="#c9c2f0" transform="rotate(-110 796.2 327.9)"/><ellipse cx="794.8" cy="326.5" rx="2.8" ry="1.6" fill="#a199de" transform="rotate(-135 794.8 326.5)"/><ellipse cx="793.2" cy="325.0" rx="3.1" ry="1.8" fill="#6257a8" transform="rotate(-119 793.2 325.0)"/><ellipse cx="797.9" cy="329.3" rx="3.4" ry="1.9" fill="#8d83cf" transform="rotate(-61 797.9 329.3)"/><ellipse cx="799.5" cy="329.6" rx="2.3" ry="1.6" fill="#8277c9" transform="rotate(-53 799.5 329.6)"/><ellipse cx="801.1" cy="327.3" rx="2.3" ry="1.5" fill="#7569bb" transform="rotate(-50 801.1 327.3)"/><ellipse cx="796.6" cy="318.6" rx="2.7" ry="1.5" fill="#8277c9" transform="rotate(-144 796.6 318.6)"/><ellipse cx="795.1" cy="322.0" rx="2.9" ry="1.7" fill="#9a90d8" transform="rotate(-135 795.1 322.0)"/><ellipse cx="793.4" cy="319.6" rx="3.0" ry="2.0" fill="#6257a8" transform="rotate(-132 793.4 319.6)"/><ellipse cx="798.8" cy="319.8" rx="2.7" ry="1.6" fill="#8d83cf" transform="rotate(-40 798.8 319.8)"/><ellipse cx="800.6" cy="322.0" rx="2.7" ry="1.9" fill="#9a90d8" transform="rotate(-59 800.6 322.0)"/><ellipse cx="802.2" cy="323.2" rx="3.2" ry="1.8" fill="#a199de" transform="rotate(-39 802.2 323.2)"/><ellipse cx="797.9" cy="314.0" rx="2.2" ry="2.0" fill="#8d83cf" transform="rotate(-141 797.9 314.0)"/><ellipse cx="796.4" cy="312.9" rx="2.4" ry="2.0" fill="#b8b0ea" transform="rotate(-143 796.4 312.9)"/><ellipse cx="795.2" cy="312.6" rx="2.8" ry="1.9" fill="#b8b0ea" transform="rotate(-126 795.2 312.6)"/><ellipse cx="799.0" cy="313.7" rx="3.4" ry="1.5" fill="#9a90d8" transform="rotate(-38 799.0 313.7)"/><ellipse cx="800.2" cy="311.2" rx="3.1" ry="1.8" fill="#8277c9" transform="rotate(-40 800.2 311.2)"/><ellipse cx="801.3" cy="314.0" rx="2.2" ry="1.7" fill="#b8b0ea" transform="rotate(-48 801.3 314.0)"/><ellipse cx="798.3" cy="307.9" rx="2.5" ry="1.7" fill="#6257a8" transform="rotate(-143 798.3 307.9)"/><ellipse cx="797.1" cy="303.5" rx="2.7" ry="1.5" fill="#8d83cf" transform="rotate(-142 797.1 303.5)"/><ellipse cx="795.6" cy="305.0" rx="2.8" ry="1.8" fill="#a199de" transform="rotate(-114 795.6 305.0)"/><ellipse cx="799.7" cy="305.4" rx="3.2" ry="2.0" fill="#8277c9" transform="rotate(-46 799.7 305.4)"/><ellipse cx="801.3" cy="305.4" rx="3.1" ry="1.7" fill="#6257a8" transform="rotate(-34 801.3 305.4)"/><ellipse cx="802.5" cy="306.9" rx="2.5" ry="1.7" fill="#7569bb" transform="rotate(-58 802.5 306.9)"/><ellipse cx="799.0" cy="306.0" rx="2.0" ry="1.4" fill="#8277c9"/><path d="M803.0 393.0L838.0 364.0" stroke="#9aa96a" stroke-width="0.8" fill="none"/><ellipse cx="803.6" cy="391.3" rx="2.3" ry="1.7" fill="#c9c2f0" transform="rotate(-72 803.6 391.3)"/><ellipse cx="801.0" cy="390.5" rx="2.7" ry="1.5" fill="#9a90d8" transform="rotate(-97 801.0 390.5)"/><ellipse cx="798.5" cy="388.6" rx="2.9" ry="1.8" fill="#b8b0ea" transform="rotate(-65 798.5 388.6)"/><ellipse cx="804.1" cy="395.2" rx="1.9" ry="1.9" fill="#8277c9" transform="rotate(7 804.1 395.2)"/><ellipse cx="805.1" cy="394.8" rx="2.9" ry="1.3" fill="#a199de" transform="rotate(-2 805.1 394.8)"/><ellipse cx="804.7" cy="396.7" rx="2.5" ry="1.6" fill="#8d83cf" transform="rotate(8 804.7 396.7)"/><ellipse cx="807.9" cy="386.7" rx="2.8" ry="1.8" fill="#6257a8" transform="rotate(-68 807.9 386.7)"/><ellipse cx="805.9" cy="385.5" rx="2.4" ry="1.8" fill="#8277c9" transform="rotate(-82 805.9 385.5)"/><ellipse cx="804.1" cy="383.5" rx="2.5" ry="1.6" fill="#a199de" transform="rotate(-79 804.1 383.5)"/><ellipse cx="809.5" cy="390.6" rx="2.1" ry="1.6" fill="#a199de" transform="rotate(10 809.5 390.6)"/><ellipse cx="811.5" cy="391.6" rx="2.6" ry="1.7" fill="#b8b0ea" transform="rotate(14 811.5 391.6)"/><ellipse cx="811.3" cy="391.6" rx="2.7" ry="1.3" fill="#7569bb" transform="rotate(-5 811.3 391.6)"/><ellipse cx="810.6" cy="385.5" rx="2.7" ry="1.9" fill="#8d83cf" transform="rotate(-92 810.6 385.5)"/><ellipse cx="811.3" cy="382.7" rx="2.9" ry="1.2" fill="#a199de" transform="rotate(-88 811.3 382.7)"/><ellipse cx="809.6" cy="380.2" rx="2.3" ry="1.5" fill="#6257a8" transform="rotate(-81 809.6 380.2)"/><ellipse cx="812.8" cy="385.9" rx="2.2" ry="1.2" fill="#b8b0ea" transform="rotate(-8 812.8 385.9)"/><ellipse cx="816.0" cy="387.1" rx="2.5" ry="1.4" fill="#6257a8" transform="rotate(1 816.0 387.1)"/><ellipse cx="816.4" cy="387.2" rx="2.3" ry="1.4" fill="#8d83cf" transform="rotate(-8 816.4 387.2)"/><ellipse cx="818.5" cy="381.4" rx="2.7" ry="1.8" fill="#7569bb" transform="rotate(-81 818.5 381.4)"/><ellipse cx="816.0" cy="379.9" rx="2.0" ry="1.8" fill="#7569bb" transform="rotate(-79 816.0 379.9)"/><ellipse cx="816.4" cy="376.0" rx="2.6" ry="1.6" fill="#8d83cf" transform="rotate(-85 816.4 376.0)"/><ellipse cx="817.5" cy="380.7" rx="2.4" ry="1.7" fill="#a199de" transform="rotate(-16 817.5 380.7)"/><ellipse cx="821.0" cy="382.8" rx="2.0" ry="1.9" fill="#a199de" transform="rotate(-19 821.0 382.8)"/><ellipse cx="821.8" cy="383.6" rx="2.2" ry="1.4" fill="#b8b0ea" transform="rotate(-3 821.8 383.6)"/><ellipse cx="820.6" cy="375.6" rx="2.6" ry="1.9" fill="#7569bb" transform="rotate(-80 820.6 375.6)"/><ellipse cx="822.7" cy="373.7" rx="2.4" ry="1.7" fill="#8d83cf" transform="rotate(-76 822.7 373.7)"/><ellipse cx="818.6" cy="373.7" rx="2.6" ry="1.9" fill="#c9c2f0" transform="rotate(-99 818.6 373.7)"/><ellipse cx="824.6" cy="376.9" rx="2.0" ry="1.5" fill="#7569bb" transform="rotate(16 824.6 376.9)"/><ellipse cx="824.2" cy="379.8" rx="2.7" ry="1.9" fill="#6257a8" transform="rotate(15 824.2 379.8)"/><ellipse cx="826.9" cy="380.7" rx="1.9" ry="1.7" fill="#a199de" transform="rotate(-10 826.9 380.7)"/><ellipse cx="829.3" cy="372.3" rx="2.8" ry="1.7" fill="#8d83cf" transform="rotate(-65 829.3 372.3)"/><ellipse cx="826.2" cy="370.8" rx="2.5" ry="1.7" fill="#7569bb" transform="rotate(-95 826.2 370.8)"/><ellipse cx="827.1" cy="371.7" rx="1.9" ry="1.7" fill="#8d83cf" transform="rotate(-92 827.1 371.7)"/><ellipse cx="827.9" cy="373.3" rx="2.6" ry="1.9" fill="#7569bb" transform="rotate(14 827.9 373.3)"/><ellipse cx="828.3" cy="372.1" rx="2.7" ry="1.5" fill="#8d83cf" transform="rotate(-13 828.3 372.1)"/><ellipse cx="829.2" cy="373.9" rx="2.6" ry="1.5" fill="#c9c2f0" transform="rotate(-4 829.2 373.9)"/><ellipse cx="834.3" cy="366.7" rx="2.6" ry="1.4" fill="#b8b0ea" transform="rotate(-62 834.3 366.7)"/><ellipse cx="833.3" cy="366.0" rx="1.9" ry="1.3" fill="#9a90d8" transform="rotate(-93 833.3 366.0)"/><ellipse cx="832.9" cy="366.6" rx="2.4" ry="1.5" fill="#6257a8" transform="rotate(-91 832.9 366.6)"/><ellipse cx="834.6" cy="369.3" rx="1.9" ry="1.4" fill="#7569bb" transform="rotate(-3 834.6 369.3)"/><ellipse cx="833.4" cy="370.7" rx="2.9" ry="1.9" fill="#c9c2f0" transform="rotate(-14 833.4 370.7)"/><ellipse cx="834.3" cy="371.8" rx="2.5" ry="1.8" fill="#6257a8" transform="rotate(-12 834.3 371.8)"/><ellipse cx="837.0" cy="365.1" rx="2.4" ry="1.7" fill="#7569bb" transform="rotate(-97 837.0 365.1)"/><ellipse cx="838.4" cy="363.2" rx="2.0" ry="1.8" fill="#6257a8" transform="rotate(-91 838.4 363.2)"/><ellipse cx="836.3" cy="362.4" rx="2.2" ry="1.8" fill="#6257a8" transform="rotate(-72 836.3 362.4)"/><ellipse cx="837.1" cy="365.3" rx="2.1" ry="1.7" fill="#b8b0ea" transform="rotate(-5 837.1 365.3)"/><ellipse cx="838.4" cy="364.9" rx="2.1" ry="1.2" fill="#b8b0ea" transform="rotate(20 838.4 364.9)"/><ellipse cx="840.7" cy="365.9" rx="2.4" ry="1.3" fill="#7569bb" transform="rotate(-7 840.7 365.9)"/><ellipse cx="838.0" cy="364.0" rx="1.8" ry="1.2" fill="#8277c9"/><path d="M748.0 464.0L746.0 426.0" stroke="#9aa96a" stroke-width="0.8" fill="none"/><ellipse cx="746.9" cy="464.0" rx="2.3" ry="1.5" fill="#c9c2f0" transform="rotate(-153 746.9 464.0)"/><ellipse cx="744.7" cy="465.6" rx="3.5" ry="1.7" fill="#c9c2f0" transform="rotate(-117 744.7 465.6)"/><ellipse cx="742.6" cy="462.7" rx="3.6" ry="1.6" fill="#6257a8" transform="rotate(-115 742.6 462.7)"/><ellipse cx="749.0" cy="464.5" rx="2.3" ry="1.5" fill="#c9c2f0" transform="rotate(-58 749.0 464.5)"/><ellipse cx="751.2" cy="462.1" rx="3.5" ry="2.2" fill="#8d83cf" transform="rotate(-47 751.2 462.1)"/><ellipse cx="753.3" cy="465.8" rx="2.7" ry="1.6" fill="#9a90d8" transform="rotate(-69 753.3 465.8)"/><ellipse cx="746.3" cy="454.7" rx="2.8" ry="1.6" fill="#a199de" transform="rotate(-142 746.3 454.7)"/><ellipse cx="743.7" cy="457.8" rx="2.7" ry="2.2" fill="#7569bb" transform="rotate(-149 743.7 457.8)"/><ellipse cx="741.0" cy="456.7" rx="3.3" ry="2.1" fill="#8d83cf" transform="rotate(-132 741.0 456.7)"/><ellipse cx="749.1" cy="455.1" rx="3.5" ry="2.0" fill="#c9c2f0" transform="rotate(-61 749.1 455.1)"/><ellipse cx="751.6" cy="458.2" rx="2.7" ry="1.6" fill="#c9c2f0" transform="rotate(-68 751.6 458.2)"/><ellipse cx="754.3" cy="456.3" rx="3.4" ry="2.2" fill="#c9c2f0" transform="rotate(-37 754.3 456.3)"/><ellipse cx="746.1" cy="450.4" rx="2.3" ry="2.2" fill="#b8b0ea" transform="rotate(-122 746.1 450.4)"/><ellipse cx="744.1" cy="450.8" rx="2.9" ry="1.5" fill="#7569bb" transform="rotate(-150 744.1 450.8)"/><ellipse cx="742.2" cy="449.3" rx="2.7" ry="2.1" fill="#b8b0ea" transform="rotate(-132 742.2 449.3)"/><ellipse cx="748.3" cy="450.1" rx="2.4" ry="2.0" fill="#a199de" transform="rotate(-51 748.3 450.1)"/><ellipse cx="750.2" cy="450.4" rx="2.8" ry="1.6" fill="#8277c9" transform="rotate(-72 750.2 450.4)"/><ellipse cx="752.2" cy="450.2" rx="2.9" ry="1.7" fill="#8d83cf" transform="rotate(-37 752.2 450.2)"/><ellipse cx="746.0" cy="441.2" rx="3.1" ry="2.1" fill="#c9c2f0" transform="rotate(-150 746.0 441.2)"/><ellipse cx="744.0" cy="443.2" rx="3.3" ry="2.3" fill="#8277c9" transform="rotate(-130 744.0 443.2)"/><ellipse cx="742.2" cy="439.3" rx="2.4" ry="1.7" fill="#7569bb" transform="rotate(-149 742.2 439.3)"/><ellipse cx="747.6" cy="438.8" rx="2.5" ry="2.0" fill="#b8b0ea" transform="rotate(-55 747.6 438.8)"/><ellipse cx="749.5" cy="441.3" rx="3.3" ry="2.2" fill="#b8b0ea" transform="rotate(-62 749.5 441.3)"/><ellipse cx="751.3" cy="438.9" rx="2.6" ry="1.9" fill="#a199de" transform="rotate(-67 751.3 438.9)"/><ellipse cx="745.6" cy="435.0" rx="2.5" ry="1.9" fill="#c9c2f0" transform="rotate(-146 745.6 435.0)"/><ellipse cx="744.0" cy="435.3" rx="2.5" ry="2.0" fill="#6257a8" transform="rotate(-138 744.0 435.3)"/><ellipse cx="742.5" cy="435.3" rx="2.4" ry="2.1" fill="#7569bb" transform="rotate(-129 742.5 435.3)"/><ellipse cx="747.2" cy="434.3" rx="2.7" ry="2.0" fill="#8d83cf" transform="rotate(-35 747.2 434.3)"/><ellipse cx="748.9" cy="431.4" rx="2.9" ry="2.2" fill="#a199de" transform="rotate(-62 748.9 431.4)"/><ellipse cx="750.2" cy="431.0" rx="2.3" ry="2.0" fill="#7569bb" transform="rotate(-50 750.2 431.0)"/><ellipse cx="745.5" cy="423.9" rx="3.6" ry="1.5" fill="#6257a8" transform="rotate(-127 745.5 423.9)"/><ellipse cx="744.5" cy="424.2" rx="2.7" ry="2.0" fill="#7569bb" transform="rotate(-128 744.5 424.2)"/><ellipse cx="743.7" cy="428.1" rx="3.3" ry="1.8" fill="#a199de" transform="rotate(-114 743.7 428.1)"/><ellipse cx="746.6" cy="423.6" rx="2.6" ry="1.6" fill="#8277c9" transform="rotate(-69 746.6 423.6)"/><ellipse cx="747.4" cy="423.7" rx="2.3" ry="2.2" fill="#8277c9" transform="rotate(-43 747.4 423.7)"/><ellipse cx="748.5" cy="425.4" rx="3.0" ry="1.9" fill="#8d83cf" transform="rotate(-45 748.5 425.4)"/><ellipse cx="746.0" cy="426.0" rx="2.1" ry="1.4" fill="#8277c9"/><path d="M724.0 485.0L688.0 458.0" stroke="#9aa96a" stroke-width="0.8" fill="none"/><ellipse cx="724.1" cy="486.9" rx="2.1" ry="1.4" fill="#8277c9" transform="rotate(-182 724.1 486.9)"/><ellipse cx="724.1" cy="488.1" rx="2.9" ry="1.6" fill="#6257a8" transform="rotate(-172 724.1 488.1)"/><ellipse cx="723.0" cy="488.0" rx="2.8" ry="1.3" fill="#9a90d8" transform="rotate(-196 723.0 488.0)"/><ellipse cx="723.7" cy="484.0" rx="2.6" ry="1.2" fill="#7569bb" transform="rotate(-84 723.7 484.0)"/><ellipse cx="724.4" cy="483.5" rx="2.2" ry="1.4" fill="#b8b0ea" transform="rotate(-106 724.4 483.5)"/><ellipse cx="725.2" cy="480.7" rx="2.0" ry="1.6" fill="#b8b0ea" transform="rotate(-85 725.2 480.7)"/><ellipse cx="719.2" cy="482.2" rx="2.6" ry="1.5" fill="#8d83cf" transform="rotate(-184 719.2 482.2)"/><ellipse cx="717.7" cy="484.6" rx="2.7" ry="1.4" fill="#9a90d8" transform="rotate(-180 717.7 484.6)"/><ellipse cx="714.6" cy="484.0" rx="2.6" ry="1.8" fill="#7569bb" transform="rotate(-199 714.6 484.0)"/><ellipse cx="721.4" cy="479.9" rx="2.2" ry="1.7" fill="#7569bb" transform="rotate(-112 721.4 479.9)"/><ellipse cx="720.3" cy="479.4" rx="2.5" ry="1.5" fill="#8277c9" transform="rotate(-85 720.3 479.4)"/><ellipse cx="723.5" cy="477.4" rx="2.1" ry="1.2" fill="#8277c9" transform="rotate(-85 723.5 477.4)"/><ellipse cx="714.9" cy="477.7" rx="3.0" ry="1.5" fill="#8277c9" transform="rotate(-184 714.9 477.7)"/><ellipse cx="710.6" cy="479.0" rx="2.2" ry="1.7" fill="#8277c9" transform="rotate(-193 710.6 479.0)"/><ellipse cx="709.9" cy="480.2" rx="2.6" ry="1.7" fill="#b8b0ea" transform="rotate(-171 709.9 480.2)"/><ellipse cx="714.4" cy="476.5" rx="2.6" ry="1.5" fill="#6257a8" transform="rotate(-111 714.4 476.5)"/><ellipse cx="715.9" cy="476.2" rx="2.5" ry="1.9" fill="#b8b0ea" transform="rotate(-107 715.9 476.2)"/><ellipse cx="717.5" cy="472.7" rx="2.3" ry="1.4" fill="#6257a8" transform="rotate(-112 717.5 472.7)"/><ellipse cx="708.9" cy="473.3" rx="2.1" ry="1.2" fill="#c9c2f0" transform="rotate(-198 708.9 473.3)"/><ellipse cx="706.5" cy="475.3" rx="2.9" ry="1.5" fill="#6257a8" transform="rotate(-194 706.5 475.3)"/><ellipse cx="704.3" cy="476.0" rx="3.0" ry="1.5" fill="#a199de" transform="rotate(-190 704.3 476.0)"/><ellipse cx="708.4" cy="472.4" rx="2.9" ry="1.8" fill="#c9c2f0" transform="rotate(-102 708.4 472.4)"/><ellipse cx="710.9" cy="471.2" rx="2.6" ry="1.7" fill="#8d83cf" transform="rotate(-107 710.9 471.2)"/><ellipse cx="712.9" cy="469.5" rx="2.6" ry="1.6" fill="#a199de" transform="rotate(-85 712.9 469.5)"/><ellipse cx="703.3" cy="469.3" rx="2.9" ry="1.6" fill="#c9c2f0" transform="rotate(-178 703.3 469.3)"/><ellipse cx="701.3" cy="472.0" rx="2.3" ry="1.5" fill="#9a90d8" transform="rotate(-184 701.3 472.0)"/><ellipse cx="700.6" cy="474.0" rx="2.8" ry="1.9" fill="#8277c9" transform="rotate(-178 700.6 474.0)"/><ellipse cx="705.1" cy="469.6" rx="2.1" ry="1.6" fill="#8d83cf" transform="rotate(-100 705.1 469.6)"/><ellipse cx="703.5" cy="468.3" rx="3.0" ry="1.6" fill="#b8b0ea" transform="rotate(-113 703.5 468.3)"/><ellipse cx="706.8" cy="466.9" rx="2.9" ry="1.2" fill="#c9c2f0" transform="rotate(-121 706.8 466.9)"/><ellipse cx="698.8" cy="466.0" rx="2.3" ry="1.6" fill="#9a90d8" transform="rotate(-181 698.8 466.0)"/><ellipse cx="697.8" cy="467.4" rx="2.6" ry="1.5" fill="#8d83cf" transform="rotate(-201 697.8 467.4)"/><ellipse cx="696.7" cy="468.9" rx="2.3" ry="1.5" fill="#a199de" transform="rotate(-186 696.7 468.9)"/><ellipse cx="697.1" cy="463.9" rx="2.5" ry="1.5" fill="#b8b0ea" transform="rotate(-98 697.1 463.9)"/><ellipse cx="698.4" cy="463.8" rx="2.0" ry="1.5" fill="#8d83cf" transform="rotate(-108 698.4 463.8)"/><ellipse cx="698.5" cy="463.7" rx="2.0" ry="1.8" fill="#9a90d8" transform="rotate(-96 698.5 463.7)"/><ellipse cx="692.3" cy="462.3" rx="2.8" ry="1.3" fill="#9a90d8" transform="rotate(-199 692.3 462.3)"/><ellipse cx="693.4" cy="462.8" rx="2.6" ry="1.5" fill="#7569bb" transform="rotate(-203 693.4 462.8)"/><ellipse cx="690.7" cy="465.6" rx="1.9" ry="1.7" fill="#8277c9" transform="rotate(-185 690.7 465.6)"/><ellipse cx="693.9" cy="462.6" rx="1.9" ry="1.2" fill="#8277c9" transform="rotate(-116 693.9 462.6)"/><ellipse cx="692.7" cy="459.3" rx="2.5" ry="1.3" fill="#8d83cf" transform="rotate(-115 692.7 459.3)"/><ellipse cx="696.2" cy="459.6" rx="2.5" ry="1.2" fill="#c9c2f0" transform="rotate(-120 696.2 459.6)"/><ellipse cx="686.5" cy="458.0" rx="2.8" ry="1.2" fill="#b8b0ea" transform="rotate(-164 686.5 458.0)"/><ellipse cx="688.8" cy="459.7" rx="2.2" ry="1.2" fill="#8d83cf" transform="rotate(-188 688.8 459.7)"/><ellipse cx="687.5" cy="459.6" rx="2.4" ry="1.2" fill="#7569bb" transform="rotate(-199 687.5 459.6)"/><ellipse cx="688.5" cy="457.3" rx="2.2" ry="1.2" fill="#a199de" transform="rotate(-86 688.5 457.3)"/><ellipse cx="689.4" cy="455.9" rx="2.8" ry="1.4" fill="#c9c2f0" transform="rotate(-99 689.4 455.9)"/><ellipse cx="687.2" cy="457.8" rx="2.7" ry="1.7" fill="#9a90d8" transform="rotate(-100 687.2 457.8)"/><ellipse cx="688.0" cy="458.0" rx="1.8" ry="1.2" fill="#8277c9"/></svg><svg style="left:0;top:0" width="1506" height="676" viewBox="0 76 1506 676"><defs><filter id="ds" x="-10%" y="-10%" width="120%" height="130%"><feDropShadow dx="1" dy="2" stdDeviation="1.2" flood-color="#000" flood-opacity="0.25"/></filter></defs><g transform="translate(1019,150) skewX(-4) scale(1,1.36)"><text x="0" y="0" style="font-family:'Liberation Sans','Noto Sans CJK SC',sans-serif;font-size:122px;font-weight:500;letter-spacing:0px" fill="#7a6d92" stroke="#b2b2b2" stroke-width="8" stroke-linejoin="round" paint-order="stroke fill" >明</text></g><g transform="translate(1197,141) skewX(-2) scale(0.78,1.22)"><text x="0" y="0" style="font-family:'Liberation Sans','Noto Sans CJK SC',sans-serif;font-size:122px;font-weight:500;letter-spacing:0px" fill="#7a6d92" stroke="#b2b2b2" stroke-width="8" stroke-linejoin="round" paint-order="stroke fill" >白</text></g><g transform="translate(1346,152) skewX(-13) scale(1,1.4)"><text x="0" y="0" style="font-family:'Liberation Sans','Noto Sans CJK SC',sans-serif;font-size:112px;font-weight:400;letter-spacing:0px" fill="#7a6d92" stroke="#b2b2b2" stroke-width="8" stroke-linejoin="round" paint-order="stroke fill" >!</text></g><g filter="url(#ds)"><text x="1001" y="236" style="font-family:'Liberation Sans','Noto Sans CJK SC',sans-serif;font-size:35px;font-weight:400;letter-spacing:4.6px" fill="#857d9f" stroke="#b4b4b8" stroke-width="6" stroke-linejoin="round" paint-order="stroke fill" >不要怪别人富！</text></g><g filter="url(#ds)"><text x="996" y="277" style="font-family:'Liberation Sans','Noto Sans CJK SC',sans-serif;font-size:17px;font-weight:400;letter-spacing:1.8px" fill="#88829a" stroke="#b4b4b8" stroke-width="4.5" stroke-linejoin="round" paint-order="stroke fill" >不要怪人家有钱！</text></g><g transform="translate(1008,302) rotate(90)" filter="url(#ds)"><text x="0" y="0" style="font-family:'Liberation Sans','Noto Sans CJK SC',sans-serif;font-size:45px;font-weight:400;letter-spacing:5px" fill="#776c8f" stroke="#ababae" stroke-width="6" stroke-linejoin="round" paint-order="stroke fill" >而是我</text></g><g transform="translate(906,296) rotate(90)"><text x="0" y="0" style="font-family:'Liberation Sans','Noto Sans CJK SC',sans-serif;font-size:23px;font-weight:500;letter-spacing:1px" fill="#b5a9d6" stroke="#fafafc" stroke-width="5" stroke-linejoin="round" paint-order="stroke fill" >我寻找快乐</text></g><g transform="translate(975,294) rotate(90)" opacity="0.55"><text x="0" y="0" style="font-family:'Liberation Sans','Noto Sans CJK SC',sans-serif;font-size:11px;font-weight:500;letter-spacing:0px" fill="#8c84a0" stroke="#a8a8a8" stroke-width="2" stroke-linejoin="round" paint-order="stroke fill" >我寻找</text></g><path d="M984 328l12-5-6 8-1-4z" fill="#c23a4a"/><path d="M983 331l8-3" stroke="#c23a4a" stroke-width="1.2"/><g filter="url(#ds)" transform="rotate(1.2 632 434)"><text x="632" y="432" style="font-family:'Liberation Sans','Noto Sans CJK SC',sans-serif;font-size:47px;font-weight:500;letter-spacing:3px" fill="#b6a7d3" stroke="#ffffff" stroke-width="8" stroke-linejoin="round" paint-order="stroke fill" >寻找幸福感</text></g><circle cx="917.5" cy="421.5" r="14" fill="#ffffff" filter="url(#ds)"/><circle cx="917.5" cy="421.5" r="11.5" fill="#f6b91f"/><path d="M913 414.5a7 7 0 0 0 0 14a4.4 7 0 0 1 0-14z" fill="#4a1f6e"/><path d="M912.6 417a4.6 4.6 0 0 0 0 9z" fill="#e6437f"/><circle cx="921" cy="417.5" r="1.5" fill="#4a1f6e"/><circle cx="921" cy="425.5" r="1.5" fill="#4a1f6e"/><path d="M690 131c2-4 8-4 9-1M692 134h14M697 127l10-1" stroke="#7fc4c0" stroke-width="0.8" fill="none"/><path d="M836 270h74M838 272c-4 0-4 8 0 8h18c4 0 6 4 2 8M840 276c2-2 4 0 2 2" stroke="#7fc4c0" stroke-width="0.9" fill="none"/><path d="M886 84h24l-4 3h-16z" fill="#8cc8c4"/><g opacity="0.86"><path d="M1272 190q-9 3-8 14q-5 10-1 22q-3 12 1 22q0 8 9 9q2 7 10 6h20q9 0 9-8q6-6 3-16q4-12-1-22q2-12-6-16q-2-9-12-9q-8-6-14-2q-6-4-10 0z" fill="#c9c9cb" filter="url(#ds)"/><rect x="1302.4" y="252.1" width="5" height="2.6" fill="#7fc08a" transform="rotate(29 1302.4 252.1)"/><rect x="1308.3" y="190.0" width="5" height="2.6" fill="#7fc08a" transform="rotate(-4 1308.3 190.0)"/><rect x="1309.3" y="232.1" width="5" height="2.6" fill="#7fc08a" transform="rotate(48 1309.3 232.1)"/><rect x="1270.3" y="219.9" width="5" height="2.6" fill="#7fc08a" transform="rotate(-30 1270.3 219.9)"/><rect x="1265.6" y="202.7" width="5" height="2.6" fill="#7fc08a" transform="rotate(-26 1265.6 202.7)"/><rect x="1308.1" y="240.1" width="5" height="2.6" fill="#7fc08a" transform="rotate(-41 1308.1 240.1)"/><rect x="1302.5" y="197.4" width="5" height="2.6" fill="#7fc08a" transform="rotate(14 1302.5 197.4)"/><rect x="1271.0" y="188.1" width="5" height="2.6" fill="#7fc08a" transform="rotate(45 1271.0 188.1)"/><rect x="1274.8" y="202.7" width="5" height="2.6" fill="#7fc08a" transform="rotate(58 1274.8 202.7)"/><rect x="1306.0" y="207.7" width="5" height="2.6" fill="#7fc08a" transform="rotate(55 1306.0 207.7)"/><rect x="1274.6" y="252.0" width="5" height="2.6" fill="#7fc08a" transform="rotate(23 1274.6 252.0)"/><rect x="1310.4" y="248.8" width="5" height="2.6" fill="#7fc08a" transform="rotate(-24 1310.4 248.8)"/><rect x="1282.0" y="199.3" width="5" height="2.6" fill="#7fc08a" transform="rotate(-43 1282.0 199.3)"/><rect x="1268.1" y="208.5" width="5" height="2.6" fill="#7fc08a" transform="rotate(12 1268.1 208.5)"/><rect x="1265.2" y="234.1" width="5" height="2.6" fill="#7fc08a" transform="rotate(-19 1265.2 234.1)"/><rect x="1279.6" y="243.7" width="5" height="2.6" fill="#7fc08a" transform="rotate(-2 1279.6 243.7)"/><rect x="1279.8" y="220.7" width="5" height="2.6" fill="#7fc08a" transform="rotate(25 1279.8 220.7)"/><rect x="1267.7" y="254.3" width="5" height="2.6" fill="#7fc08a" transform="rotate(-57 1267.7 254.3)"/><rect x="1300.2" y="245.5" width="5" height="2.6" fill="#7fc08a" transform="rotate(-58 1300.2 245.5)"/><rect x="1302.0" y="212.9" width="5" height="2.6" fill="#7fc08a" transform="rotate(9 1302.0 212.9)"/><rect x="1265.4" y="191.2" width="5" height="2.6" fill="#7fc08a" transform="rotate(-38 1265.4 191.2)"/><rect x="1309.9" y="201.4" width="5" height="2.6" fill="#7fc08a" transform="rotate(31 1309.9 201.4)"/><rect x="1308.7" y="252.1" width="5" height="2.6" fill="#7fc08a" transform="rotate(-19 1308.7 252.1)"/><rect x="1301.5" y="195.3" width="5" height="2.6" fill="#7fc08a" transform="rotate(30 1301.5 195.3)"/><rect x="1302.5" y="246.5" width="5" height="2.6" fill="#7fc08a" transform="rotate(-56 1302.5 246.5)"/><rect x="1309.5" y="194.2" width="5" height="2.6" fill="#7fc08a" transform="rotate(-19 1309.5 194.2)"/><rect x="1281.0" y="250.8" width="5" height="2.6" fill="#7fc08a" transform="rotate(5 1281.0 250.8)"/><rect x="1279.7" y="209.5" width="5" height="2.6" fill="#7fc08a" transform="rotate(-39 1279.7 209.5)"/><rect x="1268.7" y="198.1" width="5" height="2.6" fill="#7fc08a" transform="rotate(23 1268.7 198.1)"/><rect x="1311.8" y="199.0" width="5" height="2.6" fill="#7fc08a" transform="rotate(-54 1311.8 199.0)"/><rect x="1311.4" y="224.3" width="5" height="2.6" fill="#7fc08a" transform="rotate(-11 1311.4 224.3)"/><rect x="1276.2" y="228.4" width="5" height="2.6" fill="#7fc08a" transform="rotate(39 1276.2 228.4)"/><rect x="1267.6" y="250.3" width="5" height="2.6" fill="#7fc08a" transform="rotate(-56 1267.6 250.3)"/><path d="M1272 258h28" stroke="#3f8f8c" stroke-width="2.2" stroke-linecap="round"/><path d="M1286.500 228l-1.500 28M1291.500 228l2.500 28" stroke="#3a3f4a" stroke-width="2.8" stroke-linecap="round"/><path d="M1283.500 211h10.500l-1.500 18h-8z" fill="#3b909f"/><path d="M1284.500 213l-7.500-21M1293 213l12.500-17" stroke="#3b909f" stroke-width="2.600" stroke-linecap="round"/><path d="M1288.700 212v13" stroke="#2a4a66" stroke-width="1.500"/><ellipse cx="1288.700" cy="204" rx="4.600" ry="5.600" fill="#e8b48c"/><path d="M1283.500 201.500c-1-7 9-8 13-4.500l-2.500 2.500q-5-2-10.500 2z" fill="#22262e"/><path d="M1287 207h3.800v1.800h-3.800z" fill="#b03030"/></g><g filter="url(#ds)" opacity="0.88"><path d="M1150 262q2-10 10-10h6q8 2 8 6q6 2 6 10v10q0 6-8 6h-16q-8 0-8-10q0-8 2-12z" fill="#c4c4c8"/><path d="M1156 259l3-4.5h5l2.5 4.5q7 6 7 13q0 7-11 7t-11-7q0-7 4.500-13z" fill="#3c5fa8"/><path d="M1157 258.500h9" stroke="#2a4684" stroke-width="1.6"/><path d="M1158 268h6v6h-6" fill="none" stroke="#7e97cf" stroke-width="1.3"/><rect x="1167" y="265" width="9" height="14" rx="1" fill="#d9a526"/><path d="M1167 268.500h9M1167 272h9M1167 275.500h9" stroke="#b98512" stroke-width="0.8"/></g></svg><svg style="left:0;top:0" width="1506" height="676" viewBox="0 76 1506 676" shape-rendering="crispEdges"><path d="M6.5 76V752M50.5 76V752M94.5 76V752M138.5 76V752M226.5 76V752M270.5 76V752M315.5 76V752M359.5 76V752M447.5 76V752M491.5 76V752M535.5 76V752M579.5 76V752M668.5 76V752M712.5 76V752M756.5 76V752M800.5 76V752M888.5 76V752M933.5 76V752M977.5 76V752M1021.5 76V752M1109.5 76V752M1153.5 76V752M1197.5 76V752M1242.5 76V752M1330.5 76V752M1374.5 76V752M1418.5 76V752M1462.5 76V752M0 81.5H1506M0 170.5H1506M0 214.5H1506M0 258.5H1506M0 302.5H1506M0 390.5H1506M0 434.5H1506M0 478.5H1506M0 522.5H1506M0 611.5H1506M0 655.5H1506M0 699.5H1506M0 743.5H1506" stroke="rgba(0,0,0,0.055)" stroke-width="1" fill="none"/><path d="M182.5 76V752M403.5 76V752M624.5 76V752M844.5 76V752M1065.5 76V752M1286.5 76V752M0 125.5H1506M0 346.5H1506M0 567.5H1506" stroke="rgba(0,0,0,0.22)" stroke-width="1" fill="none"/></svg><div class="abs" style="left:950.7px;top:223.60000000000002px;width:38px;height:38px;border-radius:50%;background:#ececec"></div><div class="abs" style="left:950.7px;top:271.6px;width:38px;height:38px;border-radius:50%;background:#ececec"></div><div class="abs" style="left:950.7px;top:319.8px;width:38px;height:38px;border-radius:50%;background:#ececec"></div><div class="abs" style="left:950.7px;top:367.8px;width:38px;height:38px;border-radius:50%;background:#2b8bee"></div><div class="abs" style="left:950.7px;top:416px;width:38px;height:38px;border-radius:50%;background:#ececec"></div><div class="abs" style="left:950.7px;top:463.79999999999995px;width:38px;height:38px;border-radius:50%;background:#ececec"></div><svg style="left:960.7px;top:233.60000000000002px" width="18" height="18" viewBox="0 0 18 18"><path d="M3.2 11.5A6.2 6.2 0 0 1 13.6 4.4M14.8 6.500A6.2 6.2 0 0 1 4.400 13.600" fill="none" stroke="#555" stroke-width="1.6"/><path d="M14.600 1.800v3.400h-3.400M3.400 16.200v-3.400h3.400" fill="none" stroke="#555" stroke-width="1.6"/><rect x="6.6" y="6.6" width="4.8" height="4.8" fill="none" stroke="#555" stroke-width="1.5"/></svg><svg style="left:960.7px;top:280.6px" width="18" height="19" viewBox="0 0 18 19"><rect x="2" y="9" width="14" height="8.600" fill="none" stroke="#555" stroke-width="1.8"/><path d="M5.500 9V5.500a3.600 3.600 0 0 1 7 -1" fill="none" stroke="#555" stroke-width="1.8"/></svg><div class="t" style="left:956.2px;top:331.8px;font-size:12px;font-weight:bold;color:#555;letter-spacing:-0.3px">16:9</div><div class="t" style="left:957.7px;top:379.8px;font-size:12px;font-weight:bold;color:#fff;letter-spacing:-0.3px">9:16</div><svg style="left:960.7px;top:426px" width="18" height="18" viewBox="0 0 18 18"><path d="M3 12.500l1-3.600L11.200 1.700l3.100 3.100L7 12z" fill="none" stroke="#555" stroke-width="1.6" stroke-linejoin="round"/><path d="M9.200 3.700l3.100 3.100" stroke="#555" stroke-width="1.4"/><path d="M2 16h14" stroke="#555" stroke-width="1.8"/></svg><svg style="left:961.2px;top:474.79999999999995px" width="17" height="16" viewBox="0 0 17 15"><path d="M4.800 1.200h7.400l3.600 6.300-3.600 6.300H4.800L1.200 7.500z" fill="none" stroke="#555" stroke-width="1.7" stroke-linejoin="round"/><circle cx="8.500" cy="7.500" r="2.200" fill="none" stroke="#555" stroke-width="1.600"/></svg><svg style="left:0;top:0" width="1506" height="676" viewBox="0 76 1506 676"><path d="M706 752.500 C722 752.500 722 736 740 736 L766 736 C784 736 784 752.500 800 752.500Z" fill="#fff"/><rect x="747" y="740" width="12" height="2" fill="#777"/><path d="M747 744.500h12l-6 5.500z" fill="#777"/></svg><div class="t lat" style="left:4px;top:4px;font-size:12px;color:#fff;letter-spacing:0.35px">X 1005.2 Y 2698.4</div><div class="t" style="left:4px;top:21px;font-size:12px;color:#fff;letter-spacing:0.3px">旋转0.0 缩放183%</div></div><div id="panel"><div class="abs" style="left:0;top:0;width:1px;height:676px;background:#e8e8e8"></div><div class="abs" style="left:138px;top:0;width:276px;height:39px;background:#e6e6e6;border-bottom:1px solid #cfcfcf;border-left:1px solid #cfcfcf"></div><div class="abs" style="left:276px;top:0;width:1px;height:39px;background:#d4d4d4"></div><div class="t" style="left:57.5px;top:14px;font-size:12px;color:#444">文本</div><div class="t" style="left:183.0px;top:14px;font-size:12px;color:#444">预设风格</div><div class="t" style="left:321.0px;top:14px;font-size:12px;color:#444">语音合成</div><div class="t" style="left:17px;top:58px;font-size:12px;color:#999">每行最多<span class="serif" style="color:#3a8ec8;font-size:13px">15</span>个字，请通过回车换行调整段落</div><div class="abs" style="left:322px;top:50px;width:77px;height:28px;background:#fff;border:1px solid #ddd;border-radius:3px"></div><div class="t" style="left:336.5px;top:58px;font-size:12px;color:#333">导入文本</div><div class="abs" style="left:15px;top:88px;width:385px;height:461px;background:#fff;border:1px solid #d6d6d6"></div><div class="abs" style="left:32px;top:104.5px;width:14px;height:14px;background:#fff;border:1px solid #d9d0ea"></div><div class="abs" style="left:34px;top:106.5px;width:10px;height:10px;background:#b29bd8"></div><div class="t" style="left:58px;top:105.0px;font-size:12px;color:#000">让我们的年轻人</div><div class="abs" style="left:32px;top:134.5px;width:14px;height:14px;background:#fff;border:1px solid #d9d0ea"></div><div class="abs" style="left:34px;top:136.5px;width:10px;height:10px;background:#b29bd8"></div><div class="t" style="left:58px;top:135.0px;font-size:12px;color:#000">明白！</div><div class="abs" style="left:32px;top:164.5px;width:14px;height:14px;background:#fff;border:1px solid #d9d0ea"></div><div class="abs" style="left:34px;top:166.5px;width:10px;height:10px;background:#b29bd8"></div><div class="t" style="left:58px;top:165.0px;font-size:12px;color:#000">不要怪别人富!</div><div class="abs" style="left:32px;top:194.5px;width:14px;height:14px;background:#fff;border:1px solid #d9d0ea"></div><div class="abs" style="left:34px;top:196.5px;width:10px;height:10px;background:#b29bd8"></div><div class="t" style="left:58px;top:195.0px;font-size:12px;color:#000">不要怪人家有钱!</div><div class="abs" style="left:32px;top:224.5px;width:14px;height:14px;background:#fff;border:1px solid #d9d0ea"></div><div class="abs" style="left:34px;top:226.5px;width:10px;height:10px;background:#b29bd8"></div><div class="t" style="left:58px;top:225.0px;font-size:12px;color:#000">而是我</div><div class="abs" style="left:32px;top:254.5px;width:14px;height:14px;background:#fff;border:1px solid #d9d0ea"></div><div class="abs" style="left:34px;top:256.5px;width:10px;height:10px;background:#b29bd8"></div><div class="t" style="left:58px;top:255.0px;font-size:12px;color:#000">如何改变自己?</div><div class="abs" style="left:32px;top:284.5px;width:14px;height:14px;background:#fff;border:1px solid #d9d0ea"></div><div class="abs" style="left:34px;top:286.5px;width:10px;height:10px;background:#b29bd8"></div><div class="t" style="left:58px;top:285.0px;font-size:12px;color:#000">我寻找快乐</div><div class="abs" style="left:32px;top:314.5px;width:14px;height:14px;background:#fff;border:1px solid #d9d0ea"></div><div class="abs" style="left:34px;top:316.5px;width:10px;height:10px;background:#b29bd8"></div><div class="t" style="left:58px;top:315.0px;font-size:12px;color:#000">寻找幸福感</div><div class="t" style="left:17px;top:563px;font-size:12px;color:#666">字体</div><div class="t" style="left:162px;top:563px;font-size:12px;color:#666">颜色设置</div><div class="t" style="left:330px;top:563px;font-size:12px;color:#666">段落间隔</div><div class="abs" style="left:15px;top:583px;width:130px;height:28px;background:#fff;border:1px solid #dcdcdc;overflow:hidden"><div class="t" style="left:6px;top:6px;font-size:13px;color:#111;letter-spacing:0.5px">杨任东竹石体-Bold</div><div class="abs" style="left:102px;top:0;width:27px;height:26px;background:#e6e9ef"></div><svg style="left:110px;top:10px" width="10" height="6" viewBox="0 0 10 6"><path d="M0 0h10L5 6z" fill="#555"/></svg></div><div class="abs" style="left:160px;top:583px;width:55px;height:28px;background:#fff;border:1px solid #dcdcdc"></div><div class="abs" style="left:161px;top:584px;width:26px;height:26px;background:#e4e4e4;border-right:1px solid #dcdcdc"></div><div class="t" style="left:168.5px;top:588px;font-size:15px;font-weight:bold;color:#555;margin-top:0">A</div><div class="abs" style="left:167px;top:603px;width:14px;height:2px;background:#555"></div><div class="t" style="left:195.5px;top:588px;font-size:15px;font-weight:bold;color:#666;margin-top:0">A</div><div class="abs" style="left:194px;top:603px;width:14px;height:2px;background:linear-gradient(90deg,#2aa0e0 0 33%,#e0a020 33% 50%,#d02060 50% 100%)"></div><div class="abs" style="left:220px;top:583px;width:94px;height:28px;background:#fff;border:1px solid #dcdcdc"></div><div class="abs" style="left:225px;top:588px;width:18px;height:18px;background:#000;border:1px solid rgba(0,0,0,0.55);border-radius:3px"></div><div class="abs" style="left:247px;top:588px;width:18px;height:18px;background:#d09a6a;border:1px solid rgba(0,0,0,0.55);border-radius:3px"></div><div class="abs" style="left:269px;top:588px;width:18px;height:18px;background:#0a14e6;border:1px solid rgba(0,0,0,0.55);border-radius:3px"></div><div class="abs" style="left:291px;top:588px;width:18px;height:18px;background:#6aad1c;border:1px solid rgba(0,0,0,0.55);border-radius:3px"></div><div class="abs" style="left:328px;top:583px;width:56px;height:28px;background:#fff;border:1px solid #dcdcdc"></div><div class="t lat" style="left:340px;top:592px;font-size:12px;color:#333">0.1</div><svg style="left:367.5px;top:588px" width="11" height="18" viewBox="0 0 11 18"><path d="M0 6.5L5.5 0.5 11 6.5zM0 11.5h11L5.5 17.5z" fill="#333"/></svg><div class="t lat" style="left:389px;top:596px;font-size:11px;color:#333">s</div><div class="abs" style="left:15px;top:621.5px;width:384px;height:39px;background:#1070d2;border-radius:2px"></div><div class="t" style="left:182.5px;top:636px;font-size:12px;color:#fff">修改文本</div><div class="abs" style="left:404px;top:564px;width:12px;height:58px;background:#454c56;border-radius:3px 0 0 3px"></div><div class="abs" style="left:407px;top:570px;width:5px;height:46px;background:repeating-linear-gradient(180deg,rgba(69,76,86,0) 0 1px,#454c56 1px 2px),linear-gradient(180deg,#59616b 0%,#5c8f8a 55%,#62d0ae 100%)"></div></div><div id="timeline"><svg style="left:12px;top:20px" width="14" height="13" viewBox="0 0 14 13"><rect x="1" y="1" width="12" height="11" rx="1" fill="none" stroke="#555" stroke-width="1.8"/><path d="M1 4h12M1 9h12" stroke="#555" stroke-width="1.4"/></svg><div class="t" style="left:30px;top:21px;font-size:12px;color:#555">片头/片尾</div><svg style="left:95px;top:19px" width="15" height="15" viewBox="0 0 15 15"><rect x="1" y="4" width="10" height="10" fill="#1c7cd5"/><path d="M2 13l8-8M2 9l4-4M6 13l4-4" stroke="#fff" stroke-width="1.2"/><path d="M3 1.5h11M13.5 2v11" stroke="#1c7cd5" stroke-width="1.6" stroke-dasharray="1.5 1"/></svg><div class="t" style="left:112.5px;top:21px;font-size:12px;color:#1c7cd5">前景</div><svg style="left:152px;top:20px" width="12" height="13" viewBox="0 0 12 13"><circle cx="6" cy="3.4" r="2.3" fill="none" stroke="#555" stroke-width="1.7"/><path d="M1.5 12.2c0-3 2-4.6 4.5-4.6s4.5 1.6 4.5 4.6z" fill="none" stroke="#555" stroke-width="1.7" stroke-linejoin="round"/></svg><div class="t" style="left:170px;top:21px;font-size:12px;color:#555">角色</div><svg style="left:208px;top:20px" width="14" height="14" viewBox="0 0 14 14"><circle cx="3.5" cy="3.5" r="2.3" fill="none" stroke="#555" stroke-width="1.7"/><circle cx="3.5" cy="10.5" r="2.3" fill="none" stroke="#555" stroke-width="1.7"/><circle cx="10.5" cy="3.5" r="2.3" fill="none" stroke="#555" stroke-width="1.7"/><circle cx="10.5" cy="10.5" r="2.3" fill="none" stroke="#555" stroke-width="1.7"/></svg><div class="t" style="left:228.5px;top:21px;font-size:12px;color:#555">装饰</div><svg style="left:265px;top:20px" width="15" height="13" viewBox="0 0 15 13"><path d="M0 2h15" stroke="#555" stroke-width="2"/><path d="M2.5 2v5M5.5 2v10M8.5 2v10M11.5 2v6" stroke="#555" stroke-width="1.8"/></svg><div class="t" style="left:280.5px;top:21px;font-size:12px;color:#555">语音合成</div><svg style="left:342px;top:19px" width="12" height="15" viewBox="0 0 12 15"><rect x="3.6" y="0.5" width="4.8" height="8.5" rx="2.4" fill="#555"/><path d="M1.2 6.5c0 3 2 4.8 4.8 4.8s4.8-1.8 4.8-4.8M6 11.3v3" fill="none" stroke="#555" stroke-width="1.5"/></svg><div class="t" style="left:356.5px;top:21px;font-size:12px;color:#555">录音</div><svg style="left:397px;top:19px" width="16" height="13" viewBox="0 0 16 13"><path d="M1 3.2h3l1.2-2h5.6l1.2 2h3v8.8H1z" fill="none" stroke="#555" stroke-width="1.5" stroke-linejoin="round"/><circle cx="8" cy="7.2" r="2.5" fill="none" stroke="#555" stroke-width="1.5"/></svg><div class="t" style="left:416.5px;top:21px;font-size:12px;color:#555">场景截图</div><svg style="left:0;top:0" width="1920" height="276" viewBox="0 0 1920 276"><circle cx="720.8" cy="26.799999999999955" r="12" fill="#fff" stroke="#555" stroke-width="2"/><circle cx="762.9" cy="26.799999999999955" r="13.9" fill="#fff" stroke="#555" stroke-width="2"/><circle cx="805" cy="26.799999999999955" r="12" fill="#fff" stroke="#555" stroke-width="2"/><circle cx="846.7" cy="26.799999999999955" r="12" fill="#fff" stroke="#555" stroke-width="2"/><path d="M717.4 21.799999999999955v10" stroke="#555" stroke-width="2.8"/><path d="M726.4 21.599999999999955v10.4l-8.2-5.2z" fill="#555"/><path d="M757.5 19.799999999999955v14l13.5-7z" fill="#555"/><path d="M808.6 21.799999999999955v10" stroke="#555" stroke-width="2.8"/><path d="M799.6 21.599999999999955v10.4l8.2-5.2z" fill="#555"/><path d="M842.5 22.599999999999955a6 6 0 1 1 -1.6 5.4" fill="none" stroke="#555" stroke-width="1.8"/><path d="M840.3000000000001 19.599999999999955v4.8h4.8" fill="none" stroke="#555" stroke-width="1.8"/></svg><div class="t" style="left:875px;top:21px;font-size:12px;color:#555">预览分辨率</div><div class="abs" style="left:937px;top:14px;width:88px;height:24px;background:#fff;border:1px solid #d8d8d8"></div><div class="abs" style="left:1002px;top:15px;width:22px;height:22px;background:#e6e9ef"></div><svg style="left:1008px;top:23px" width="10" height="6" viewBox="0 0 10 6"><path d="M0 0h10L5 6z" fill="#555"/></svg><div class="t" style="left:943px;top:20px;font-size:13px;color:#111">二分之一</div><div class="t serif" style="left:1542px;top:19px;font-size:16px;font-weight:bold;color:#2b80c8">00:00:10.24 /</div><div class="t serif" style="left:1636px;top:19px;font-size:16px;color:#888;text-decoration:underline;text-underline-offset:2px">00:00:10.70</div><div class="abs" style="left:1722px;top:25px;width:10px;height:2px;background:#999"></div><div class="abs" style="left:1742px;top:25px;width:10px;height:2px;background:#888"></div><div class="abs" style="left:1746px;top:21px;width:2px;height:10px;background:#888"></div><svg style="left:1779px;top:18px" width="16" height="16" viewBox="0 0 16 16"><circle cx="7" cy="7" r="5.6" fill="none" stroke="#777" stroke-width="1.2"/><path d="M4.2 7h5.6M11 11l3.6 3.6" stroke="#777" stroke-width="1.2"/></svg><div class="abs" style="left:1806px;top:25px;width:77px;height:2px;background:#e4e4e4"></div><div class="abs" style="left:1796px;top:20.5px;width:11px;height:11px;border-radius:50%;background:#fff;border:2px solid #444"></div><svg style="left:1889px;top:18px" width="16" height="16" viewBox="0 0 16 16"><circle cx="7" cy="7" r="5.6" fill="none" stroke="#777" stroke-width="1.2"/><path d="M4.2 7h5.6M7 4.2v5.6M11 11l3.6 3.6" stroke="#777" stroke-width="1.2"/></svg><div class="abs" style="left:0;top:51px;width:1920px;height:1px;background:#dedede"></div><div class="abs" style="left:160px;top:74px;width:1690px;height:12px;background:#e0e0e0"></div><div class="abs" style="left:160px;top:86px;width:1690px;height:150px;background:#f5f5f5"></div><div class="abs" style="left:0;top:86px;width:1920px;height:1px;background:#dcdcdc"></div><div class="abs" style="left:0;top:146px;width:1920px;height:1px;background:#dcdcdc"></div><div class="abs" style="left:0;top:176px;width:1920px;height:1px;background:#dcdcdc"></div><div class="abs" style="left:0;top:206px;width:1920px;height:1px;background:#dcdcdc"></div><div class="abs" style="left:0;top:236px;width:1920px;height:1px;background:#dcdcdc"></div><div class="abs" style="left:0;top:266px;width:1920px;height:1px;background:#dcdcdc"></div><div class="abs" style="left:159px;top:51px;width:1px;height:225px;background:#d6d6d6"></div><div class="abs" style="left:1850px;top:51px;width:1px;height:225px;background:#d6d6d6"></div><svg style="left:0;top:0" width="1920" height="276" viewBox="0 0 1920 276" shape-rendering="crispEdges"><path d="M175.5 69V74M191.5 69V74M206.5 69V74M222.5 69V74M238.5 69V74M254.5 69V74M270.5 69V74M285.5 69V74M301.5 69V74M333.5 69V74M349.5 69V74M364.5 69V74M380.5 69V74M396.5 69V74M412.5 69V74M428.5 69V74M443.5 69V74M459.5 69V74M491.5 69V74M507.5 69V74M522.5 69V74M538.5 69V74M554.5 69V74M570.5 69V74M586.5 69V74M601.5 69V74M617.5 69V74M649.5 69V74M665.5 69V74M680.5 69V74M696.5 69V74M712.5 69V74M728.5 69V74M744.5 69V74M759.5 69V74M775.5 69V74M807.5 69V74M823.5 69V74M838.5 69V74M854.5 69V74M870.5 69V74M886.5 69V74M902.5 69V74M917.5 69V74M933.5 69V74M965.5 69V74M981.5 69V74M996.5 69V74M1012.5 69V74M1028.5 69V74M1044.5 69V74M1060.5 69V74M1075.5 69V74M1091.5 69V74M1123.5 69V74M1139.5 69V74M1154.5 69V74M1170.5 69V74M1186.5 69V74M1202.5 69V74M1218.5 69V74M1233.5 69V74M1249.5 69V74M1281.5 69V74M1297.5 69V74M1312.5 69V74M1328.5 69V74M1344.5 69V74M1360.5 69V74M1376.5 69V74M1391.5 69V74M1407.5 69V74M1439.5 69V74M1455.5 69V74M1470.5 69V74M1486.5 69V74M1502.5 69V74M1518.5 69V74M1534.5 69V74M1549.5 69V74M1565.5 69V74M1597.5 69V74M1613.5 69V74M1628.5 69V74M1644.5 69V74M1660.5 69V74M1676.5 69V74M1692.5 69V74M1707.5 69V74M1723.5 69V74M1755.5 69V74M1771.5 69V74M1786.5 69V74M1802.5 69V74M1818.5 69V74M1834.5 69V74" stroke="#dedede" stroke-width="1"/><path d="M317.5 64V74M475.5 64V74M633.5 64V74M791.5 64V74M949.5 64V74M1107.5 64V74M1265.5 64V74M1423.5 64V74M1581.5 64V74M1739.5 64V74" stroke="#d4d4d4" stroke-width="1"/></svg><div class="t serif" style="left:165px;top:53px;font-size:12px;color:#aaa">0s</div><div class="t serif" style="left:312.0px;top:53px;font-size:12px;color:#aaa">1s</div><div class="t serif" style="left:470.0px;top:53px;font-size:12px;color:#aaa">2s</div><div class="t serif" style="left:628.0px;top:53px;font-size:12px;color:#aaa">3s</div><div class="t serif" style="left:786.0px;top:53px;font-size:12px;color:#aaa">4s</div><div class="t serif" style="left:944.0px;top:53px;font-size:12px;color:#aaa">5s</div><div class="t serif" style="left:1102.0px;top:53px;font-size:12px;color:#aaa">6s</div><div class="t serif" style="left:1260.0px;top:53px;font-size:12px;color:#aaa">7s</div><div class="t serif" style="left:1418.0px;top:53px;font-size:12px;color:#aaa">8s</div><div class="t serif" style="left:1576.0px;top:53px;font-size:12px;color:#aaa">9s</div><div class="t serif" style="left:1731.0px;top:53px;font-size:12px;color:#aaa">10s</div><div class="abs" style="left:160px;top:74px;width:7px;height:12px;background:#3a7fe0;border-radius:1px"></div><div class="abs" style="left:162px;top:77px;width:1px;height:7px;background:#fff"></div><div class="abs" style="left:164px;top:77px;width:1px;height:7px;background:#fff"></div><div class="abs" style="left:1843px;top:74px;width:7px;height:12px;background:#3a7fe0;border-radius:1px"></div><div class="abs" style="left:1845px;top:77px;width:1px;height:7px;background:#fff"></div><div class="abs" style="left:1847px;top:77px;width:1px;height:7px;background:#fff"></div><svg style="left:6px;top:107px" width="18" height="18" viewBox="0 0 18 18"><rect x="1" y="1" width="16" height="16" rx="1.5" fill="none" stroke="#555" stroke-width="1.8"/></svg><div class="t serif" style="left:9.5px;top:108px;font-size:15px;font-weight:bold;color:#555">T</div><div class="t" style="left:32px;top:111px;font-size:12px;color:#555">旋转文字</div><svg style="left:134px;top:110px" width="12" height="12" viewBox="0 0 12 12"><circle cx="6" cy="6" r="5.2" fill="none" stroke="#777" stroke-width="1"/></svg><div class="t" style="left:137.5px;top:111.5px;font-size:9px;color:#777;margin-top:0">?</div><svg style="left:6px;top:152px" width="18" height="18" viewBox="0 0 18 18"><rect x="1" y="1" width="16" height="16" rx="1.5" fill="#555" stroke="#555" stroke-width="1.8"/><path d="M1.5 16.5L16.5 1.5M1.5 10l8.5-8.5M8 16.5l8.5-8.5" stroke="#fff" stroke-width="2"/></svg><div class="t" style="left:32px;top:156px;font-size:12px;color:#555">背景</div><svg style="left:6px;top:182px" width="19" height="18" viewBox="0 0 19 18"><rect x="1" y="4" width="13" height="13" rx="1" fill="#555" stroke="#555" stroke-width="1.6"/><path d="M1.5 16.5L13.5 4.5M1.5 11l6.5-6.5M7 16.5l6.5-6.5" stroke="#fff" stroke-width="1.8"/><path d="M4 1.2h14M17.2 2v12" stroke="#555" stroke-width="1.8" stroke-dasharray="1.6 1"/></svg><div class="t" style="left:32px;top:186px;font-size:12px;color:#555">前景</div><svg style="left:6px;top:212px" width="18" height="18" viewBox="0 0 18 18"><rect x="1" y="1" width="16" height="16" rx="1.5" fill="none" stroke="#555" stroke-width="1.8"/><circle cx="7.6" cy="11.8" r="2" fill="none" stroke="#555" stroke-width="1.6"/><path d="M9.6 11.8V4.6h2.6" fill="none" stroke="#555" stroke-width="1.6"/></svg><div class="t" style="left:32px;top:215px;font-size:12px;color:#555">声音1</div><svg style="left:144px;top:215px" width="12" height="12" viewBox="0 0 13 13"><path d="M1 4.6h2.6L7 1.6v9.8L3.6 8.4H1z" fill="none" stroke="#777" stroke-width="1.1" stroke-linejoin="round"/><path d="M9.4 3.4c1.6 1.8 1.6 4.4 0 6.2" fill="none" stroke="#777" stroke-width="1.1" stroke-linecap="round"/></svg><div class="abs" style="left:164px;top:90px;width:261.5px;height:52px;background:#fff;border:1px solid #d4d4d4;box-shadow:0 0 0 1px rgba(0,0,0,0.03)"></div><div class="t serif" style="left:184px;top:105px;font-size:21px;color:#9a9aa8">T</div><div class="t" style="left:218px;top:109px;font-size:14px;color:#444">让我们的年轻人</div><div class="abs" style="left:386.5px;top:90px;width:20px;height:20px;background:#fff;border:1px solid #d0d0d0"></div><div class="abs" style="left:405.5px;top:90px;width:20px;height:20px;background:#fff;border:1px solid #d0d0d0"></div><svg style="left:389.5px;top:94px" width="15" height="13" viewBox="0 0 15 13"><circle cx="5.6" cy="2.6" r="1.9" fill="none" stroke="#444" stroke-width="1.6"/><path d="M1.2 11.5h12.6V6.6c0-1-1-1.4-2-1.2-1.6.4-2.2 2.2-4 2.2H4.4C2.6 7.6 1.2 8.6 1.2 10z" fill="none" stroke="#444" stroke-width="1.7" stroke-linejoin="round"/></svg><svg style="left:409.5px;top:94px" width="13" height="13" viewBox="0 0 13 13"><path d="M1 4.6h2.6L7 1.6v9.8L3.6 8.4H1z" fill="none" stroke="#bdbdbd" stroke-width="1.4" stroke-linejoin="round"/><path d="M9.4 3.4c1.6 1.8 1.6 4.4 0 6.2" fill="none" stroke="#bdbdbd" stroke-width="1.4" stroke-linecap="round"/></svg><div class="abs" style="left:434px;top:90px;width:67.5px;height:52px;background:#fff;border:1px solid #d4d4d4;box-shadow:0 0 0 1px rgba(0,0,0,0.03)"></div><div class="t serif" style="left:462px;top:105px;font-size:21px;color:#9a9aa8">T</div><div class="abs" style="left:462.5px;top:90px;width:20px;height:20px;background:#fff;border:1px solid #d0d0d0"></div><div class="abs" style="left:481.5px;top:90px;width:20px;height:20px;background:#fff;border:1px solid #d0d0d0"></div><svg style="left:465.5px;top:93px" width="15" height="15" viewBox="0 0 15 15"><path d="M5.8 1.2l1.5 2.9 3.2.4-2.3 2.2.6 3.2-3-1.6-2.9 1.6.6-3.2L1.2 4.5l3.2-.4z" fill="none" stroke="#444" stroke-width="1.4" stroke-linejoin="round"/><path d="M8.6 8.4l4.6 4.8" stroke="#444" stroke-width="2.2" stroke-linecap="round"/></svg><svg style="left:485.5px;top:94px" width="13" height="13" viewBox="0 0 13 13"><path d="M1 4.6h2.6L7 1.6v9.8L3.6 8.4H1z" fill="none" stroke="#bdbdbd" stroke-width="1.4" stroke-linejoin="round"/><path d="M9.4 3.4c1.6 1.8 1.6 4.4 0 6.2" fill="none" stroke="#bdbdbd" stroke-width="1.4" stroke-linecap="round"/></svg><div class="abs" style="left:510.5px;top:90px;width:198.0px;height:52px;background:#fff;border:1px solid #d4d4d4;box-shadow:0 0 0 1px rgba(0,0,0,0.03)"></div><div class="t serif" style="left:530px;top:105px;font-size:21px;color:#9a9aa8">T</div><div class="t" style="left:564px;top:109px;font-size:14px;color:#444">不要怪别人富!</div><div class="abs" style="left:669.5px;top:90px;width:20px;height:20px;background:#fff;border:1px solid #d0d0d0"></div><div class="abs" style="left:688.5px;top:90px;width:20px;height:20px;background:#fff;border:1px solid #d0d0d0"></div><svg style="left:672.5px;top:94px" width="15" height="13" viewBox="0 0 15 13"><circle cx="5.6" cy="2.6" r="1.9" fill="none" stroke="#444" stroke-width="1.6"/><path d="M1.2 11.5h12.6V6.6c0-1-1-1.4-2-1.2-1.6.4-2.2 2.2-4 2.2H4.4C2.6 7.6 1.2 8.6 1.2 10z" fill="none" stroke="#444" stroke-width="1.7" stroke-linejoin="round"/></svg><svg style="left:692.5px;top:94px" width="13" height="13" viewBox="0 0 13 13"><path d="M1 4.6h2.6L7 1.6v9.8L3.6 8.4H1z" fill="none" stroke="#bdbdbd" stroke-width="1.4" stroke-linejoin="round"/><path d="M9.4 3.4c1.6 1.8 1.6 4.4 0 6.2" fill="none" stroke="#bdbdbd" stroke-width="1.4" stroke-linecap="round"/></svg><div class="abs" style="left:717px;top:90px;width:174.5px;height:52px;background:#fff;border:1px solid #d4d4d4;box-shadow:0 0 0 1px rgba(0,0,0,0.03)"></div><div class="t serif" style="left:737px;top:105px;font-size:21px;color:#9a9aa8">T</div><div class="t" style="left:770px;top:109px;font-size:14px;color:#444">不要怪人家有…</div><div class="abs" style="left:852.5px;top:90px;width:20px;height:20px;background:#fff;border:1px solid #d0d0d0"></div><div class="abs" style="left:871.5px;top:90px;width:20px;height:20px;background:#fff;border:1px solid #d0d0d0"></div><svg style="left:855.5px;top:94px" width="15" height="13" viewBox="0 0 15 13"><circle cx="5.6" cy="2.6" r="1.9" fill="none" stroke="#444" stroke-width="1.6"/><path d="M1.2 11.5h12.6V6.6c0-1-1-1.4-2-1.2-1.6.4-2.2 2.2-4 2.2H4.4C2.6 7.6 1.2 8.6 1.2 10z" fill="none" stroke="#444" stroke-width="1.7" stroke-linejoin="round"/></svg><svg style="left:875.5px;top:94px" width="13" height="13" viewBox="0 0 13 13"><path d="M1 4.6h2.6L7 1.6v9.8L3.6 8.4H1z" fill="none" stroke="#bdbdbd" stroke-width="1.4" stroke-linejoin="round"/><path d="M9.4 3.4c1.6 1.8 1.6 4.4 0 6.2" fill="none" stroke="#bdbdbd" stroke-width="1.4" stroke-linecap="round"/></svg><div class="abs" style="left:900px;top:90px;width:204.5px;height:52px;background:#fff;border:1px solid #d4d4d4;box-shadow:0 0 0 1px rgba(0,0,0,0.03)"></div><div class="t serif" style="left:920px;top:105px;font-size:21px;color:#9a9aa8">T</div><div class="t" style="left:953px;top:109px;font-size:14px;color:#444">而是我</div><div class="abs" style="left:1065.5px;top:90px;width:20px;height:20px;background:#fff;border:1px solid #d0d0d0"></div><div class="abs" style="left:1084.5px;top:90px;width:20px;height:20px;background:#fff;border:1px solid #d0d0d0"></div><svg style="left:1068.5px;top:93px" width="15" height="15" viewBox="0 0 15 15"><path d="M5.8 1.2l1.5 2.9 3.2.4-2.3 2.2.6 3.2-3-1.6-2.9 1.6.6-3.2L1.2 4.5l3.2-.4z" fill="none" stroke="#444" stroke-width="1.4" stroke-linejoin="round"/><path d="M8.6 8.4l4.6 4.8" stroke="#444" stroke-width="2.2" stroke-linecap="round"/></svg><svg style="left:1088.5px;top:94px" width="13" height="13" viewBox="0 0 13 13"><path d="M1 4.6h2.6L7 1.6v9.8L3.6 8.4H1z" fill="none" stroke="#bdbdbd" stroke-width="1.4" stroke-linejoin="round"/><path d="M9.4 3.4c1.6 1.8 1.6 4.4 0 6.2" fill="none" stroke="#bdbdbd" stroke-width="1.4" stroke-linecap="round"/></svg><div class="abs" style="left:1113px;top:90px;width:182.5px;height:52px;background:#fff;border:1px solid #d4d4d4;box-shadow:0 0 0 1px rgba(0,0,0,0.03)"></div><div class="t serif" style="left:1133px;top:105px;font-size:21px;color:#9a9aa8">T</div><div class="t" style="left:1167px;top:109px;font-size:14px;color:#444">如何改变自己?</div><div class="abs" style="left:1256.5px;top:90px;width:20px;height:20px;background:#fff;border:1px solid #d0d0d0"></div><div class="abs" style="left:1275.5px;top:90px;width:20px;height:20px;background:#fff;border:1px solid #d0d0d0"></div><svg style="left:1259.5px;top:94px" width="15" height="13" viewBox="0 0 15 13"><circle cx="5.6" cy="2.6" r="1.9" fill="none" stroke="#444" stroke-width="1.6"/><path d="M1.2 11.5h12.6V6.6c0-1-1-1.4-2-1.2-1.6.4-2.2 2.2-4 2.2H4.4C2.6 7.6 1.2 8.6 1.2 10z" fill="none" stroke="#444" stroke-width="1.7" stroke-linejoin="round"/></svg><svg style="left:1279.5px;top:94px" width="13" height="13" viewBox="0 0 13 13"><path d="M1 4.6h2.6L7 1.6v9.8L3.6 8.4H1z" fill="none" stroke="#bdbdbd" stroke-width="1.4" stroke-linejoin="round"/><path d="M9.4 3.4c1.6 1.8 1.6 4.4 0 6.2" fill="none" stroke="#bdbdbd" stroke-width="1.4" stroke-linecap="round"/></svg><div class="abs" style="left:1466.5px;top:90px;width:196.0px;height:52px;background:#fff;border:1px solid #d4d4d4;box-shadow:0 0 0 1px rgba(0,0,0,0.03)"></div><div class="t serif" style="left:1484px;top:105px;font-size:21px;color:#9a9aa8">T</div><div class="t" style="left:1520px;top:109px;font-size:14px;color:#444">我寻找快乐</div><div class="abs" style="left:1623.5px;top:90px;width:20px;height:20px;background:#fff;border:1px solid #d0d0d0"></div><div class="abs" style="left:1642.5px;top:90px;width:20px;height:20px;background:#fff;border:1px solid #d0d0d0"></div><svg style="left:1626.5px;top:94px" width="15" height="13" viewBox="0 0 15 13"><circle cx="5.6" cy="2.6" r="1.9" fill="none" stroke="#444" stroke-width="1.6"/><path d="M1.2 11.5h12.6V6.6c0-1-1-1.4-2-1.2-1.6.4-2.2 2.2-4 2.2H4.4C2.6 7.6 1.2 8.6 1.2 10z" fill="none" stroke="#444" stroke-width="1.7" stroke-linejoin="round"/></svg><svg style="left:1646.5px;top:94px" width="13" height="13" viewBox="0 0 13 13"><path d="M1 4.6h2.6L7 1.6v9.8L3.6 8.4H1z" fill="none" stroke="#bdbdbd" stroke-width="1.4" stroke-linejoin="round"/><path d="M9.4 3.4c1.6 1.8 1.6 4.4 0 6.2" fill="none" stroke="#bdbdbd" stroke-width="1.4" stroke-linecap="round"/></svg><div class="abs" style="left:1671.5px;top:90px;width:101.0px;height:52px;background:#fff;border:1px solid #d4d4d4;box-shadow:0 0 0 1px rgba(0,0,0,0.03)"></div><div class="t serif" style="left:1691px;top:105px;font-size:21px;color:#9a9aa8">T</div><div class="t" style="left:1725px;top:109px;font-size:14px;color:#444">寻…</div><div class="abs" style="left:1733.5px;top:90px;width:20px;height:20px;background:#fff;border:1px solid #d0d0d0"></div><div class="abs" style="left:1752.5px;top:90px;width:20px;height:20px;background:#fff;border:1px solid #d0d0d0"></div><svg style="left:1736.5px;top:94px" width="15" height="13" viewBox="0 0 15 13"><circle cx="5.6" cy="2.6" r="1.9" fill="none" stroke="#444" stroke-width="1.6"/><path d="M1.2 11.5h12.6V6.6c0-1-1-1.4-2-1.2-1.6.4-2.2 2.2-4 2.2H4.4C2.6 7.6 1.2 8.6 1.2 10z" fill="none" stroke="#444" stroke-width="1.7" stroke-linejoin="round"/></svg><svg style="left:1756.5px;top:94px" width="13" height="13" viewBox="0 0 13 13"><path d="M1 4.6h2.6L7 1.6v9.8L3.6 8.4H1z" fill="none" stroke="#bdbdbd" stroke-width="1.4" stroke-linejoin="round"/><path d="M9.4 3.4c1.6 1.8 1.6 4.4 0 6.2" fill="none" stroke="#bdbdbd" stroke-width="1.4" stroke-linecap="round"/></svg><div class="abs" style="left:164px;top:151px;width:308px;height:22px;border:1px solid #d0d0d0;background-color:#f8f8fa;background-image:repeating-linear-gradient(90deg,rgba(60,60,80,0.05) 0 1px,transparent 1px 3px),repeating-linear-gradient(90deg,rgba(60,60,80,0.05) 0 1px,transparent 1px 7px)"></div><svg style="left:168px;top:155px" width="14" height="14" viewBox="0 0 14 14"><rect width="14" height="14" fill="#999"/><path d="M0 14L14 0M0 7l7-7M7 14l7-7" stroke="#f4f4f6" stroke-width="2"/></svg><div class="t" style="left:186px;top:156px;font-size:12px;color:#111">背景(默认淡入)</div><svg style="left:0;top:0" width="1920" height="276" viewBox="0 0 1920 276"><path d="M314 152l4 12M357.5 152l1 20M389 152l-6 20M376 162l6 10" stroke="#c3d07a" stroke-width="1.2" fill="none"/><circle cx="317" cy="166" r="2.5" fill="#9d94d8" opacity="0.85"/><circle cx="320" cy="169" r="2.1" fill="#9d94d8" opacity="0.85"/><circle cx="341" cy="155" r="3.0" fill="#9d94d8" opacity="0.85"/><circle cx="345" cy="158" r="2.5" fill="#9d94d8" opacity="0.85"/><circle cx="343" cy="167" r="3.0" fill="#9d94d8" opacity="0.85"/><circle cx="340" cy="170" r="2.1" fill="#9d94d8" opacity="0.85"/><circle cx="346" cy="170" r="2.1" fill="#9d94d8" opacity="0.85"/><circle cx="381" cy="159" r="2.1" fill="#9d94d8" opacity="0.85"/><circle cx="379" cy="162" r="1.7" fill="#9d94d8" opacity="0.85"/></svg><div class="abs" style="left:490.5px;top:154px;width:16px;height:16px;background:#e2e2e2;transform:rotate(45deg)"></div><div class="abs" style="left:493.5px;top:161px;width:10px;height:2px;background:#444"></div><div class="abs" style="left:497.5px;top:157px;width:2px;height:10px;background:#444"></div><div class="abs" style="left:175px;top:184px;width:16px;height:16px;background:#e2e2e2;transform:rotate(45deg)"></div><div class="abs" style="left:178px;top:191px;width:10px;height:2px;background:#444"></div><div class="abs" style="left:182px;top:187px;width:2px;height:10px;background:#444"></div><div class="abs" style="left:164px;top:211px;width:1668px;height:22px;background:#fff;border:1px solid #d6d6d6"></div><svg style="left:0;top:0" width="1920" height="276" viewBox="0 0 1920 276"><path d="M166.0 220.5 167.5 220.5 169.0 220.5 170.5 220.5 172.0 220.5 173.5 220.5 175.0 220.5 176.5 220.5 178.0 220.5 179.5 220.5 181.0 220.5 182.5 220.5 184.0 220.5 185.5 220.5 187.0 220.5 188.5 220.5 190.0 220.5 191.5 220.5 193.0 220.5 194.5 220.5 196.0 220.5 197.5 220.5 199.0 220.5 200.5 220.5 202.0 220.5 203.5 220.5 205.0 220.5 206.5 220.5 208.0 220.5 209.5 220.5 211.0 220.5 212.5 220.5 214.0 220.5 215.5 220.5 217.0 220.5 218.5 220.5 220.0 220.5 221.5 220.5 223.0 220.5 224.5 220.5 226.0 220.5 227.5 220.5 229.0 220.5 230.5 220.5 232.0 220.5 233.5 220.5 235.0 220.5 236.5 220.5 238.0 220.5 239.5 220.5 241.0 220.0 242.5 220.1 244.0 219.8 245.5 219.8 247.0 220.3 248.5 220.2 250.0 220.3 251.5 219.8 253.0 220.3 254.5 220.2 256.0 220.1 257.5 220.4 259.0 219.6 260.5 219.5 262.0 219.7 263.5 220.0 265.0 220.2 266.5 220.0 268.0 219.3 269.5 219.0 271.0 219.9 272.5 219.3 274.0 218.6 275.5 218.6 277.0 217.5 278.5 217.9 280.0 217.4 281.5 214.4 283.0 214.6 284.5 216.7 286.0 215.9 287.5 218.0 289.0 217.9 290.5 216.0 292.0 217.9 293.5 217.4 295.0 219.0 296.5 218.6 298.0 219.8 299.5 219.2 301.0 219.3 302.5 219.9 304.0 219.9 305.5 220.1 307.0 220.3 308.5 219.6 310.0 219.6 311.5 220.1 313.0 219.8 314.5 219.8 316.0 220.3 317.5 220.2 319.0 220.4 320.5 220.3 322.0 220.2 323.5 219.6 325.0 219.9 326.5 220.0 328.0 219.7 329.5 220.1 331.0 220.3 332.5 219.9 334.0 220.1 335.5 220.2 337.0 219.7 338.5 220.2 340.0 219.9 341.5 219.8 343.0 220.3 344.5 220.0 346.0 220.3 347.5 220.0 349.0 219.8 350.5 219.9 352.0 220.0 353.5 220.4 355.0 220.3 356.5 219.9 358.0 220.0 359.5 219.7 361.0 220.0 362.5 220.0 364.0 220.1 365.5 219.8 367.0 219.8 368.5 220.3 370.0 219.6 371.5 219.8 373.0 220.0 374.5 219.8 376.0 219.9 377.5 220.2 379.0 220.2 380.5 220.1 382.0 220.2 383.5 219.6 385.0 219.7 386.5 219.9 388.0 219.8 389.5 219.7 391.0 220.1 392.5 220.1 394.0 220.0 395.5 220.0 397.0 220.0 398.5 220.3 400.0 219.9 401.5 220.1 403.0 220.3 404.5 219.9 406.0 220.2 407.5 220.4 409.0 219.9 410.5 220.1 412.0 220.1 413.5 220.3 415.0 219.7 416.5 220.3 418.0 219.7 419.5 220.3 421.0 220.0 422.5 220.1 424.0 219.6 425.5 220.0 427.0 219.6 428.5 219.9 430.0 219.6 431.5 219.4 433.0 219.6 434.5 219.6 436.0 219.1 437.5 218.3 439.0 218.4 440.5 219.1 442.0 218.3 443.5 217.6 445.0 217.5 446.5 217.5 448.0 217.1 449.5 218.0 451.0 219.2 452.5 218.9 454.0 217.8 455.5 218.2 457.0 218.1 458.5 217.8 460.0 219.0 461.5 219.6 463.0 219.0 464.5 219.8 466.0 219.7 467.5 220.1 469.0 220.2 470.5 219.8 472.0 220.0 473.5 219.6 475.0 220.0 476.5 220.2 478.0 219.9 479.5 219.9 481.0 220.2 482.5 220.0 484.0 219.8 485.5 220.4 487.0 220.3 488.5 219.8 490.0 219.6 491.5 219.5 493.0 220.1 494.5 220.3 496.0 220.2 497.5 219.5 499.0 219.4 500.5 219.4 502.0 219.6 503.5 219.3 505.0 218.6 506.5 218.9 508.0 218.4 509.5 217.5 511.0 218.3 512.5 216.2 514.0 215.9 515.5 217.8 517.0 216.0 518.5 218.3 520.0 217.9 521.5 216.2 523.0 217.4 524.5 217.0 526.0 216.7 527.5 218.5 529.0 217.3 530.5 217.1 532.0 218.9 533.5 217.1 535.0 216.8 536.5 217.3 538.0 216.1 539.5 217.8 541.0 216.3 542.5 217.0 544.0 215.9 545.5 216.9 547.0 216.2 548.5 219.0 550.0 217.5 551.5 218.1 553.0 219.3 554.5 219.0 556.0 219.5 557.5 219.6 559.0 220.3 560.5 220.1 562.0 220.3 563.5 220.0 565.0 219.6 566.5 219.7 568.0 219.4 569.5 216.8 571.0 217.8 572.5 216.1 574.0 215.2 575.5 214.0 577.0 215.8 578.5 217.5 580.0 216.2 581.5 217.7 583.0 216.3 584.5 219.3 586.0 218.7 587.5 218.7 589.0 218.9 590.5 219.1 592.0 218.0 593.5 217.8 595.0 217.4 596.5 217.4 598.0 219.0 599.5 216.8 601.0 217.4 602.5 217.9 604.0 219.0 605.5 217.1 607.0 218.6 608.5 218.2 610.0 218.8 611.5 217.7 613.0 218.8 614.5 218.7 616.0 218.4 617.5 218.8 619.0 218.3 620.5 219.5 622.0 219.3 623.5 219.5 625.0 219.6 626.5 219.9 628.0 220.0 629.5 219.9 631.0 219.0 632.5 220.0 634.0 220.0 635.5 219.6 637.0 219.5 638.5 218.8 640.0 218.8 641.5 219.6 643.0 219.3 644.5 219.5 646.0 219.2 647.5 218.1 649.0 219.4 650.5 218.1 652.0 217.4 653.5 219.0 655.0 218.4 656.5 219.4 658.0 217.8 659.5 218.3 661.0 218.0 662.5 217.3 664.0 217.3 665.5 219.1 667.0 217.7 668.5 219.5 670.0 217.8 671.5 218.5 673.0 218.7 674.5 218.8 676.0 219.2 677.5 218.6 679.0 218.4 680.5 218.7 682.0 219.2 683.5 219.2 685.0 219.5 686.5 218.8 688.0 219.6 689.5 219.6 691.0 220.0 692.5 219.2 694.0 219.5 695.5 219.3 697.0 219.9 698.5 219.8 700.0 219.7 701.5 219.8 703.0 220.1 704.5 219.9 706.0 218.8 707.5 217.5 709.0 217.5 710.5 217.1 712.0 216.8 713.5 214.9 715.0 215.6 716.5 216.0 718.0 214.3 719.5 214.3 721.0 213.6 722.5 216.6 724.0 218.8 725.5 217.7 727.0 218.5 728.5 217.6 730.0 219.1 731.5 217.3 733.0 219.2 734.5 217.3 736.0 216.9 737.5 218.8 739.0 218.9 740.5 218.2 742.0 217.1 743.5 219.1 745.0 218.6 746.5 217.2 748.0 217.5 749.5 219.2 751.0 218.5 752.5 219.4 754.0 219.3 755.5 218.4 757.0 219.3 758.5 219.2 760.0 218.7 761.5 218.8 763.0 219.0 764.5 219.8 766.0 219.3 767.5 218.9 769.0 219.0 770.5 219.1 772.0 219.5 773.5 219.7 775.0 219.4 776.5 219.5 778.0 219.7 779.5 220.2 781.0 220.0 782.5 219.8 784.0 219.8 785.5 219.7 787.0 220.0 788.5 219.8 790.0 220.3 791.5 219.9 793.0 220.2 794.5 220.4 796.0 220.2 797.5 220.3 799.0 219.7 800.5 220.3 802.0 219.7 803.5 220.0 805.0 219.7 806.5 220.0 808.0 219.4 809.5 219.6 811.0 219.6 812.5 219.3 814.0 220.0 815.5 219.6 817.0 219.2 818.5 219.4 820.0 219.2 821.5 219.9 823.0 219.4 824.5 218.0 826.0 219.2 827.5 218.0 829.0 219.0 830.5 218.4 832.0 218.2 833.5 219.1 835.0 217.7 836.5 218.9 838.0 217.9 839.5 218.5 841.0 218.4 842.5 219.1 844.0 217.5 845.5 218.3 847.0 218.1 848.5 218.3 850.0 219.0 851.5 218.9 853.0 218.7 854.5 219.7 856.0 219.0 857.5 218.9 859.0 219.2 860.5 219.8 862.0 219.8 863.5 219.4 865.0 219.2 866.5 219.3 868.0 219.8 869.5 220.0 871.0 220.2 872.5 219.6 874.0 220.0 875.5 220.0 877.0 220.0 878.5 219.3 880.0 219.3 881.5 219.4 883.0 219.0 884.5 219.9 886.0 218.2 887.5 218.5 889.0 218.4 890.5 217.6 892.0 218.4 893.5 216.3 895.0 218.1 896.5 217.7 898.0 217.9 899.5 217.8 901.0 215.5 902.5 217.5 904.0 216.4 905.5 218.1 907.0 218.2 908.5 217.5 910.0 218.1 911.5 218.6 913.0 218.2 914.5 219.2 916.0 218.5 917.5 218.6 919.0 219.0 920.5 218.8 922.0 220.0 923.5 219.7 925.0 219.1 926.5 219.1 928.0 219.0 929.5 219.0 931.0 218.9 932.5 219.5 934.0 219.0 935.5 219.1 937.0 218.0 938.5 219.6 940.0 219.1 941.5 217.7 943.0 218.8 944.5 218.8 946.0 218.6 947.5 217.9 949.0 218.2 950.5 217.7 952.0 217.8 953.5 218.2 955.0 218.6 956.5 217.8 958.0 217.2 959.5 216.7 961.0 218.1 962.5 217.7 964.0 217.9 965.5 218.8 967.0 217.7 968.5 217.4 970.0 218.5 971.5 217.4 973.0 217.7 974.5 217.0 976.0 218.8 977.5 218.4 979.0 217.5 980.5 218.8 982.0 219.6 983.5 219.2 985.0 219.4 986.5 219.0 988.0 218.9 989.5 218.9 991.0 219.8 992.5 219.8 994.0 219.2 995.5 219.6 997.0 219.2 998.5 220.0 1000.0 219.8 1001.5 219.5 1003.0 219.3 1004.5 220.0 1006.0 219.5 1007.5 219.6 1009.0 219.5 1010.5 218.6 1012.0 218.8 1013.5 219.0 1015.0 218.4 1016.5 218.8 1018.0 218.5 1019.5 219.0 1021.0 217.8 1022.5 218.7 1024.0 217.7 1025.5 216.7 1027.0 218.7 1028.5 218.3 1030.0 217.5 1031.5 216.5 1033.0 217.7 1034.5 217.2 1036.0 218.6 1037.5 217.9 1039.0 217.5 1040.5 218.2 1042.0 216.1 1043.5 217.8 1045.0 217.6 1046.5 217.5 1048.0 216.7 1049.5 217.5 1051.0 218.9 1052.5 218.2 1054.0 218.7 1055.5 218.3 1057.0 219.4 1058.5 218.7 1060.0 218.6 1061.5 219.2 1063.0 219.6 1064.5 219.7 1066.0 219.3 1067.5 219.4 1069.0 219.0 1070.5 219.1 1072.0 218.8 1073.5 219.6 1075.0 219.6 1076.5 218.8 1078.0 218.3 1079.5 218.8 1081.0 218.8 1082.5 217.8 1084.0 219.0 1085.5 218.2 1087.0 218.2 1088.5 218.1 1090.0 217.1 1091.5 216.5 1093.0 217.2 1094.5 217.2 1096.0 217.5 1097.5 217.8 1099.0 217.3 1100.5 217.6 1102.0 216.5 1103.5 217.1 1105.0 217.9 1106.5 216.5 1108.0 217.1 1109.5 218.4 1111.0 219.1 1112.5 218.9 1114.0 218.2 1115.5 217.7 1117.0 218.9 1118.5 218.2 1120.0 219.2 1121.5 219.4 1123.0 218.4 1124.5 218.9 1126.0 219.5 1127.5 219.1 1129.0 219.2 1130.5 220.0 1132.0 219.6 1133.5 219.4 1135.0 219.9 1136.5 219.0 1138.0 219.7 1139.5 219.7 1141.0 218.4 1142.5 218.2 1144.0 219.1 1145.5 219.1 1147.0 217.5 1148.5 217.7 1150.0 217.3 1151.5 216.9 1153.0 217.9 1154.5 218.4 1156.0 218.4 1157.5 216.5 1159.0 216.1 1160.5 217.1 1162.0 218.3 1163.5 218.4 1165.0 218.8 1166.5 218.1 1168.0 217.3 1169.5 217.7 1171.0 218.9 1172.5 218.1 1174.0 218.4 1175.5 219.1 1177.0 218.4 1178.5 218.4 1180.0 219.1 1181.5 219.8 1183.0 219.5 1184.5 219.2 1186.0 219.5 1187.5 220.3 1189.0 219.9 1190.5 220.0 1192.0 219.5 1193.5 220.1 1195.0 219.7 1196.5 219.6 1198.0 220.1 1199.5 219.7 1201.0 220.3 1202.5 220.0 1204.0 219.8 1205.5 219.9 1207.0 220.3 1208.5 220.0 1210.0 219.6 1211.5 220.3 1213.0 220.4 1214.5 220.3 1216.0 220.1 1217.5 219.7 1219.0 220.0 1220.5 219.7 1222.0 219.9 1223.5 220.1 1225.0 219.7 1226.5 219.5 1228.0 217.9 1229.5 217.3 1231.0 218.2 1232.5 218.5 1234.0 217.6 1235.5 216.4 1237.0 217.0 1238.5 217.7 1240.0 217.1 1241.5 217.7 1243.0 216.7 1244.5 218.9 1246.0 219.0 1247.5 218.5 1249.0 219.1 1250.5 218.7 1252.0 219.4 1253.5 218.1 1255.0 218.0 1256.5 217.4 1258.0 219.1 1259.5 219.2 1261.0 219.2 1262.5 218.7 1264.0 218.0 1265.5 217.2 1267.0 217.6 1268.5 218.1 1270.0 217.3 1271.5 217.0 1273.0 218.6 1274.5 217.6 1276.0 218.4 1277.5 218.6 1279.0 218.3 1280.5 219.0 1282.0 218.0 1283.5 217.9 1285.0 218.1 1286.5 219.6 1288.0 219.3 1289.5 219.8 1291.0 219.7 1292.5 218.9 1294.0 219.5 1295.5 220.0 1297.0 219.5 1298.5 219.7 1300.0 220.0 1301.5 219.8 1303.0 219.6 1304.5 219.6 1306.0 219.8 1307.5 220.1 1309.0 219.8 1310.5 219.7 1312.0 219.6 1313.5 219.4 1315.0 220.3 1316.5 220.0 1318.0 219.8 1319.5 219.6 1321.0 219.7 1322.5 218.6 1324.0 218.1 1325.5 218.5 1327.0 218.6 1328.5 216.0 1330.0 216.6 1331.5 216.9 1333.0 217.4 1334.5 216.9 1336.0 218.6 1337.5 218.9 1339.0 218.8 1340.5 219.0 1342.0 218.5 1343.5 219.2 1345.0 217.3 1346.5 216.7 1348.0 216.7 1349.5 217.8 1351.0 216.6 1352.5 215.3 1354.0 216.5 1355.5 218.0 1357.0 218.4 1358.5 218.1 1360.0 217.9 1361.5 218.5 1363.0 219.5 1364.5 219.5 1366.0 219.8 1367.5 219.3 1369.0 219.5 1370.5 218.9 1372.0 219.4 1373.5 219.0 1375.0 218.7 1376.5 218.3 1378.0 217.8 1379.5 217.9 1381.0 218.2 1382.5 218.5 1384.0 218.0 1385.5 219.4 1387.0 217.0 1388.5 217.9 1390.0 216.9 1391.5 217.2 1393.0 217.2 1394.5 218.8 1396.0 218.0 1397.5 219.0 1399.0 217.6 1400.5 218.9 1402.0 217.8 1403.5 219.2 1405.0 218.2 1406.5 218.9 1408.0 218.1 1409.5 218.9 1411.0 218.4 1412.5 218.4 1414.0 218.2 1415.5 219.6 1417.0 218.8 1418.5 219.7 1420.0 219.6 1421.5 219.3 1423.0 219.0 1424.5 219.6 1426.0 219.7 1427.5 220.1 1429.0 219.6 1430.5 220.0 1432.0 220.1 1433.5 219.9 1435.0 219.8 1436.5 220.1 1438.0 219.9 1439.5 220.2 1441.0 219.8 1442.5 220.0 1444.0 220.2 1445.5 219.5 1447.0 219.9 1448.5 219.8 1450.0 219.6 1451.5 220.1 1453.0 219.4 1454.5 220.1 1456.0 218.9 1457.5 219.2 1459.0 219.8 1460.5 218.9 1462.0 218.0 1463.5 217.0 1465.0 216.5 1466.5 217.4 1468.0 215.7 1469.5 215.3 1471.0 216.9 1472.5 218.1 1474.0 217.5 1475.5 218.7 1477.0 218.3 1478.5 218.5 1480.0 218.9 1481.5 219.0 1483.0 219.3 1484.5 218.9 1486.0 220.1 1487.5 220.0 1489.0 219.6 1490.5 219.7 1492.0 219.7 1493.5 220.0 1495.0 219.5 1496.5 219.9 1498.0 219.8 1499.5 219.4 1501.0 218.7 1502.5 218.6 1504.0 219.4 1505.5 219.0 1507.0 217.4 1508.5 218.3 1510.0 218.7 1511.5 219.2 1513.0 216.6 1514.5 217.7 1516.0 218.0 1517.5 216.7 1519.0 217.4 1520.5 217.4 1522.0 217.5 1523.5 217.4 1525.0 216.9 1526.5 217.0 1528.0 217.5 1529.5 218.5 1531.0 218.1 1532.5 218.3 1534.0 219.1 1535.5 218.7 1537.0 218.1 1538.5 218.5 1540.0 219.8 1541.5 219.7 1543.0 219.8 1544.5 219.7 1546.0 219.3 1547.5 219.5 1549.0 220.0 1550.5 220.0 1552.0 219.5 1553.5 220.2 1555.0 220.2 1556.5 220.1 1558.0 219.3 1559.5 219.0 1561.0 218.4 1562.5 219.3 1564.0 218.6 1565.5 218.5 1567.0 216.4 1568.5 215.3 1570.0 215.8 1571.5 218.0 1573.0 216.7 1574.5 218.7 1576.0 217.3 1577.5 218.1 1579.0 218.6 1580.5 219.8 1582.0 219.1 1583.5 219.6 1585.0 219.9 1586.5 219.9 1588.0 220.0 1589.5 220.0 1591.0 220.3 1592.5 219.7 1594.0 219.6 1595.5 220.2 1597.0 220.0 1598.5 219.9 1600.0 219.9 1601.5 219.8 1603.0 220.1 1604.5 219.8 1606.0 219.7 1607.5 219.6 1609.0 220.2 1610.5 220.3 1612.0 220.3 1613.5 220.3 1615.0 220.3 1616.5 220.0 1618.0 219.6 1619.5 220.4 1621.0 220.1 1622.5 220.1 1624.0 219.9 1625.5 219.1 1627.0 219.8 1628.5 218.5 1630.0 218.6 1631.5 217.6 1633.0 219.3 1634.5 217.2 1636.0 216.9 1637.5 215.0 1639.0 216.9 1640.5 215.6 1642.0 218.5 1643.5 215.9 1645.0 218.5 1646.5 218.2 1648.0 218.6 1649.5 217.9 1651.0 219.2 1652.5 218.5 1654.0 219.7 1655.5 219.6 1657.0 219.8 1658.5 220.1 1660.0 220.4 1661.5 219.8 1663.0 220.2 1664.5 220.1 1666.0 220.2 1667.5 219.6 1669.0 219.6 1670.5 219.6 1672.0 218.6 1673.5 219.1 1675.0 217.6 1676.5 216.4 1678.0 215.2 1679.5 217.0 1681.0 215.9 1682.5 218.3 1684.0 218.3 1685.5 218.1 1687.0 218.5 1688.5 218.1 1690.0 218.9 1691.5 218.8 1693.0 219.3 1694.5 218.6 1696.0 219.1 1697.5 218.4 1699.0 215.1 1700.5 218.2 1702.0 218.3 1703.5 216.8 1705.0 218.7 1706.5 219.8 1708.0 219.7 1709.5 220.0 1711.0 220.2 1712.5 219.7 1714.0 219.7 1715.5 220.3 1717.0 219.9 1718.5 220.2 1720.0 219.9 1721.5 219.9 1723.0 220.4 1724.5 219.7 1726.0 219.9 1727.5 219.6 1729.0 219.7 1730.5 219.6 1732.0 219.7 1733.5 219.6 1735.0 218.7 1736.5 218.5 1738.0 217.1 1739.5 217.6 1741.0 217.0 1742.5 218.4 1744.0 217.7 1745.5 218.3 1747.0 218.6 1748.5 218.4 1750.0 218.4 1751.5 218.7 1753.0 218.9 1754.5 219.7 1756.0 219.6 1757.5 219.6 1759.0 219.3 1760.5 219.8 1762.0 218.9 1763.5 219.7 1765.0 219.6 1766.5 218.5 1768.0 219.2 1769.5 218.8 1771.0 218.9 1772.5 219.7 1774.0 219.4 1775.5 219.4 1777.0 219.2 1778.5 217.8 1780.0 217.9 1781.5 218.1 1783.0 219.7 1784.5 218.6 1786.0 219.4 1787.5 218.1 1789.0 219.4 1790.5 219.5 1792.0 219.4 1793.5 219.7 1795.0 218.9 1796.5 219.0 1798.0 219.9 1799.5 219.4 1801.0 219.5 1802.5 219.5 1804.0 219.8 1805.5 220.1 1807.0 219.6 1808.5 219.6 1810.0 219.7 1811.5 219.5 1813.0 220.0 1814.5 219.9 1816.0 220.2 1817.5 219.8 1819.0 219.7 1820.5 219.7 1822.0 220.1 1823.5 219.9 1825.0 220.3 1826.5 219.8 1828.0 220.0 1829.5 219.8 1829.5 222.2 1828.0 222.1 1826.5 222.2 1825.0 221.7 1823.5 222.0 1822.0 221.9 1820.5 222.5 1819.0 222.2 1817.5 222.1 1816.0 221.6 1814.5 222.2 1813.0 222.0 1811.5 222.5 1810.0 222.4 1808.5 222.3 1807.0 222.3 1805.5 222.0 1804.0 222.2 1802.5 222.5 1801.0 222.5 1799.5 222.8 1798.0 222.3 1796.5 222.9 1795.0 222.9 1793.5 222.4 1792.0 222.7 1790.5 222.6 1789.0 222.4 1787.5 224.0 1786.0 222.5 1784.5 223.6 1783.0 222.4 1781.5 224.5 1780.0 223.9 1778.5 223.6 1777.0 223.0 1775.5 222.7 1774.0 222.8 1772.5 222.6 1771.0 222.9 1769.5 223.1 1768.0 223.2 1766.5 223.3 1765.0 222.4 1763.5 222.3 1762.0 223.0 1760.5 222.3 1759.0 222.9 1757.5 222.3 1756.0 222.4 1754.5 222.5 1753.0 223.3 1751.5 223.5 1750.0 223.2 1748.5 223.3 1747.0 223.8 1745.5 223.7 1744.0 224.6 1742.5 223.1 1741.0 224.6 1739.5 224.7 1738.0 224.8 1736.5 223.4 1735.0 223.2 1733.5 222.4 1732.0 222.3 1730.5 222.4 1729.0 222.4 1727.5 222.4 1726.0 222.2 1724.5 222.5 1723.0 221.7 1721.5 221.9 1720.0 222.0 1718.5 221.7 1717.0 222.3 1715.5 221.8 1714.0 222.2 1712.5 222.3 1711.0 221.9 1709.5 222.2 1708.0 222.3 1706.5 222.2 1705.0 223.1 1703.5 224.8 1702.0 223.4 1700.5 223.8 1699.0 226.7 1697.5 223.8 1696.0 222.9 1694.5 223.0 1693.0 222.5 1691.5 223.3 1690.0 223.2 1688.5 223.9 1687.0 223.4 1685.5 224.0 1684.0 223.5 1682.5 223.8 1681.0 226.0 1679.5 224.6 1678.0 226.8 1676.5 225.0 1675.0 224.5 1673.5 223.2 1672.0 223.2 1670.5 222.3 1669.0 222.7 1667.5 222.3 1666.0 221.9 1664.5 221.8 1663.0 221.9 1661.5 222.1 1660.0 221.6 1658.5 221.9 1657.0 222.1 1655.5 222.3 1654.0 222.5 1652.5 223.3 1651.0 222.8 1649.5 224.2 1648.0 223.3 1646.5 223.5 1645.0 223.5 1643.5 226.5 1642.0 223.6 1640.5 226.1 1639.0 224.7 1637.5 227.0 1636.0 225.9 1634.5 225.0 1633.0 223.0 1631.5 224.1 1630.0 223.4 1628.5 223.6 1627.0 222.0 1625.5 223.0 1624.0 222.3 1622.5 221.9 1621.0 222.0 1619.5 221.6 1618.0 222.4 1616.5 221.9 1615.0 221.7 1613.5 221.7 1612.0 221.7 1610.5 221.8 1609.0 221.9 1607.5 222.2 1606.0 222.3 1604.5 222.2 1603.0 221.9 1601.5 222.1 1600.0 222.3 1598.5 222.1 1597.0 222.0 1595.5 221.7 1594.0 222.2 1592.5 222.3 1591.0 221.7 1589.5 221.9 1588.0 222.0 1586.5 222.1 1585.0 222.0 1583.5 222.4 1582.0 222.7 1580.5 222.2 1579.0 223.5 1577.5 224.5 1576.0 224.1 1574.5 223.2 1573.0 225.6 1571.5 224.2 1570.0 225.9 1568.5 226.3 1567.0 225.6 1565.5 223.7 1564.0 223.4 1562.5 222.7 1561.0 223.4 1559.5 223.3 1558.0 222.8 1556.5 221.9 1555.0 221.8 1553.5 221.8 1552.0 222.5 1550.5 221.9 1549.0 221.9 1547.5 222.4 1546.0 222.8 1544.5 222.4 1543.0 222.3 1541.5 222.3 1540.0 222.1 1538.5 223.5 1537.0 223.4 1535.5 223.4 1534.0 222.7 1532.5 223.8 1531.0 223.6 1529.5 223.6 1528.0 224.4 1526.5 225.0 1525.0 225.5 1523.5 224.9 1522.0 224.9 1520.5 224.7 1519.0 224.1 1517.5 225.0 1516.0 224.0 1514.5 224.4 1513.0 224.9 1511.5 223.2 1510.0 223.4 1508.5 223.7 1507.0 224.8 1505.5 223.4 1504.0 222.5 1502.5 223.4 1501.0 223.4 1499.5 222.7 1498.0 222.2 1496.5 222.1 1495.0 222.6 1493.5 222.1 1492.0 222.4 1490.5 222.2 1489.0 222.3 1487.5 221.9 1486.0 222.0 1484.5 222.9 1483.0 222.9 1481.5 223.1 1480.0 222.8 1478.5 223.3 1477.0 224.2 1475.5 223.1 1474.0 225.0 1472.5 224.1 1471.0 224.7 1469.5 226.8 1468.0 226.4 1466.5 224.8 1465.0 225.7 1463.5 225.1 1462.0 224.5 1460.5 223.1 1459.0 222.4 1457.5 222.5 1456.0 222.8 1454.5 222.0 1453.0 222.6 1451.5 221.8 1450.0 222.3 1448.5 222.4 1447.0 222.1 1445.5 222.4 1444.0 221.9 1442.5 222.0 1441.0 222.5 1439.5 221.9 1438.0 222.1 1436.5 221.9 1435.0 222.1 1433.5 222.0 1432.0 221.9 1430.5 222.1 1429.0 222.4 1427.5 222.1 1426.0 222.2 1424.5 222.4 1423.0 223.0 1421.5 222.7 1420.0 222.4 1418.5 222.4 1417.0 223.2 1415.5 222.5 1414.0 223.5 1412.5 223.9 1411.0 223.5 1409.5 223.1 1408.0 223.7 1406.5 223.1 1405.0 224.1 1403.5 222.6 1402.0 224.3 1400.5 223.5 1399.0 223.8 1397.5 223.0 1396.0 224.0 1394.5 223.4 1393.0 224.4 1391.5 224.8 1390.0 225.3 1388.5 224.3 1387.0 225.1 1385.5 222.7 1384.0 223.8 1382.5 223.3 1381.0 224.1 1379.5 223.6 1378.0 223.7 1376.5 223.6 1375.0 223.6 1373.5 223.2 1372.0 222.5 1370.5 223.3 1369.0 222.3 1367.5 222.8 1366.0 222.1 1364.5 222.3 1363.0 222.4 1361.5 223.4 1360.0 224.1 1358.5 223.6 1357.0 223.9 1355.5 223.8 1354.0 226.1 1352.5 226.5 1351.0 225.9 1349.5 224.5 1348.0 225.3 1346.5 225.4 1345.0 224.5 1343.5 223.2 1342.0 223.8 1340.5 223.4 1339.0 223.0 1337.5 223.1 1336.0 223.4 1334.5 224.9 1333.0 224.6 1331.5 225.6 1330.0 225.5 1328.5 225.5 1327.0 223.4 1325.5 223.7 1324.0 224.0 1322.5 223.5 1321.0 222.2 1319.5 222.3 1318.0 222.1 1316.5 222.1 1315.0 221.7 1313.5 222.5 1312.0 222.4 1310.5 222.1 1309.0 222.2 1307.5 222.0 1306.0 222.2 1304.5 222.5 1303.0 222.4 1301.5 222.1 1300.0 222.0 1298.5 222.2 1297.0 222.7 1295.5 222.1 1294.0 222.5 1292.5 223.0 1291.0 222.2 1289.5 222.4 1288.0 222.9 1286.5 222.5 1285.0 224.0 1283.5 223.9 1282.0 224.2 1280.5 223.0 1279.0 223.8 1277.5 223.4 1276.0 223.2 1274.5 224.9 1273.0 223.5 1271.5 225.1 1270.0 224.5 1268.5 223.9 1267.0 224.3 1265.5 224.4 1264.0 223.9 1262.5 223.6 1261.0 222.9 1259.5 222.8 1258.0 222.7 1256.5 224.6 1255.0 224.1 1253.5 223.7 1252.0 222.8 1250.5 223.6 1249.0 223.0 1247.5 223.5 1246.0 223.0 1244.5 223.5 1243.0 225.2 1241.5 224.1 1240.0 224.8 1238.5 224.8 1237.0 225.3 1235.5 226.2 1234.0 224.5 1232.5 223.9 1231.0 223.4 1229.5 224.9 1228.0 224.6 1226.5 222.3 1225.0 222.2 1223.5 222.1 1222.0 222.1 1220.5 222.3 1219.0 222.0 1217.5 222.3 1216.0 222.0 1214.5 221.8 1213.0 221.7 1211.5 221.6 1210.0 222.2 1208.5 222.0 1207.0 221.7 1205.5 222.2 1204.0 222.1 1202.5 221.9 1201.0 221.7 1199.5 222.4 1198.0 221.9 1196.5 222.3 1195.0 222.1 1193.5 221.9 1192.0 222.6 1190.5 222.1 1189.0 222.1 1187.5 221.8 1186.0 222.6 1184.5 222.6 1183.0 222.6 1181.5 222.3 1180.0 222.8 1178.5 223.8 1177.0 223.3 1175.5 222.7 1174.0 223.3 1172.5 224.1 1171.0 222.9 1169.5 224.2 1168.0 224.7 1166.5 224.0 1165.0 223.0 1163.5 223.2 1162.0 223.6 1160.5 225.4 1159.0 225.4 1157.5 226.1 1156.0 223.1 1154.5 223.8 1153.0 223.7 1151.5 225.0 1150.0 224.6 1148.5 224.9 1147.0 224.7 1145.5 222.8 1144.0 222.9 1142.5 223.7 1141.0 223.5 1139.5 222.4 1138.0 222.1 1136.5 222.8 1135.0 222.1 1133.5 222.8 1132.0 222.4 1130.5 222.1 1129.0 222.9 1127.5 222.8 1126.0 222.4 1124.5 223.4 1123.0 223.8 1121.5 222.4 1120.0 222.6 1118.5 223.9 1117.0 223.3 1115.5 224.3 1114.0 224.1 1112.5 223.2 1111.0 223.2 1109.5 224.2 1108.0 225.4 1106.5 225.2 1105.0 224.4 1103.5 225.4 1102.0 224.9 1100.5 224.9 1099.0 224.4 1097.5 224.1 1096.0 224.8 1094.5 224.6 1093.0 225.5 1091.5 225.4 1090.0 225.3 1088.5 224.0 1087.0 223.9 1085.5 224.1 1084.0 223.1 1082.5 223.9 1081.0 223.5 1079.5 223.3 1078.0 223.5 1076.5 223.2 1075.0 222.4 1073.5 222.6 1072.0 223.1 1070.5 223.1 1069.0 223.1 1067.5 222.7 1066.0 222.6 1064.5 222.1 1063.0 222.5 1061.5 222.8 1060.0 223.3 1058.5 223.2 1057.0 222.6 1055.5 223.2 1054.0 223.3 1052.5 224.3 1051.0 223.2 1049.5 224.0 1048.0 225.1 1046.5 225.2 1045.0 224.7 1043.5 224.2 1042.0 226.1 1040.5 223.5 1039.0 224.4 1037.5 224.0 1036.0 223.4 1034.5 224.7 1033.0 224.8 1031.5 225.1 1030.0 224.5 1028.5 223.5 1027.0 223.3 1025.5 225.2 1024.0 224.1 1022.5 223.7 1021.0 223.8 1019.5 223.0 1018.0 223.7 1016.5 222.8 1015.0 223.9 1013.5 223.0 1012.0 223.2 1010.5 223.3 1009.0 222.4 1007.5 222.3 1006.0 222.7 1004.5 222.0 1003.0 222.6 1001.5 222.5 1000.0 222.3 998.5 222.2 997.0 222.6 995.5 222.7 994.0 222.8 992.5 222.1 991.0 222.3 989.5 222.8 988.0 223.1 986.5 222.7 985.0 222.4 983.5 222.5 982.0 222.6 980.5 223.6 979.0 224.7 977.5 223.6 976.0 223.6 974.5 224.3 973.0 224.3 971.5 224.4 970.0 223.1 968.5 225.3 967.0 224.4 965.5 223.2 964.0 224.1 962.5 224.5 961.0 223.7 959.5 225.0 958.0 224.5 956.5 224.1 955.0 223.5 953.5 223.9 952.0 224.8 950.5 224.2 949.0 224.0 947.5 224.7 946.0 223.1 944.5 223.5 943.0 223.7 941.5 224.0 940.0 222.9 938.5 222.4 937.0 224.0 935.5 223.1 934.0 222.9 932.5 222.4 931.0 223.4 929.5 223.0 928.0 222.9 926.5 223.0 925.0 222.8 923.5 222.4 922.0 222.2 920.5 223.0 919.0 222.7 917.5 223.0 916.0 223.1 914.5 222.8 913.0 224.0 911.5 223.5 910.0 223.9 908.5 225.1 907.0 223.8 905.5 224.0 904.0 226.0 902.5 225.1 901.0 226.3 899.5 224.0 898.0 224.1 896.5 224.3 895.0 223.7 893.5 225.3 892.0 223.8 890.5 224.6 889.0 223.8 887.5 223.5 886.0 224.0 884.5 222.3 883.0 223.2 881.5 222.4 880.0 222.8 878.5 222.6 877.0 221.8 875.5 222.1 874.0 222.0 872.5 222.6 871.0 221.8 869.5 222.1 868.0 222.4 866.5 222.8 865.0 222.9 863.5 222.5 862.0 222.1 860.5 222.1 859.0 222.7 857.5 223.1 856.0 223.2 854.5 222.3 853.0 223.2 851.5 223.1 850.0 222.8 848.5 223.4 847.0 223.9 845.5 223.5 844.0 225.1 842.5 222.8 841.0 223.3 839.5 223.1 838.0 223.9 836.5 222.9 835.0 224.2 833.5 223.1 832.0 223.8 830.5 223.3 829.0 222.9 827.5 223.6 826.0 223.0 824.5 223.9 823.0 222.5 821.5 222.2 820.0 222.7 818.5 222.4 817.0 222.9 815.5 222.5 814.0 221.9 812.5 222.8 811.0 222.4 809.5 222.6 808.0 222.6 806.5 222.0 805.0 222.5 803.5 222.0 802.0 222.5 800.5 221.7 799.0 222.3 797.5 221.8 796.0 221.7 794.5 221.7 793.0 221.8 791.5 222.2 790.0 221.7 788.5 222.2 787.0 222.0 785.5 222.2 784.0 222.1 782.5 222.2 781.0 222.0 779.5 221.8 778.0 222.2 776.5 222.5 775.0 222.6 773.5 222.4 772.0 222.7 770.5 222.8 769.0 222.8 767.5 222.9 766.0 222.5 764.5 222.2 763.0 222.9 761.5 223.3 760.0 223.1 758.5 222.6 757.0 222.8 755.5 223.4 754.0 222.7 752.5 222.6 751.0 223.5 749.5 223.0 748.0 224.4 746.5 224.2 745.0 223.1 743.5 222.8 742.0 224.5 740.5 223.9 739.0 223.2 737.5 223.5 736.0 225.0 734.5 224.4 733.0 222.9 731.5 224.7 730.0 222.7 728.5 224.5 727.0 223.6 725.5 224.2 724.0 223.5 722.5 225.6 721.0 227.5 719.5 227.2 718.0 228.0 716.5 226.2 715.0 227.5 713.5 227.0 712.0 225.8 710.5 225.2 709.0 225.1 707.5 224.2 706.0 223.2 704.5 222.2 703.0 221.9 701.5 222.1 700.0 222.3 698.5 222.2 697.0 222.1 695.5 222.6 694.0 222.3 692.5 222.7 691.0 221.9 689.5 222.4 688.0 222.3 686.5 223.0 685.0 222.5 683.5 223.0 682.0 222.7 680.5 223.3 679.0 223.3 677.5 223.3 676.0 222.8 674.5 223.3 673.0 223.1 671.5 223.1 670.0 224.0 668.5 222.9 667.0 224.7 665.5 222.9 664.0 224.2 662.5 224.2 661.0 224.3 659.5 223.7 658.0 224.1 656.5 222.7 655.0 223.4 653.5 223.2 652.0 224.6 650.5 223.9 649.0 222.6 647.5 223.8 646.0 222.9 644.5 222.4 643.0 222.7 641.5 222.2 640.0 223.0 638.5 223.6 637.0 222.3 635.5 222.2 634.0 222.1 632.5 222.1 631.0 223.1 629.5 222.1 628.0 222.0 626.5 222.3 625.0 222.3 623.5 222.5 622.0 222.5 620.5 222.3 619.0 223.5 617.5 223.2 616.0 223.2 614.5 223.2 613.0 223.5 611.5 224.4 610.0 223.1 608.5 223.3 607.0 223.6 605.5 224.8 604.0 223.2 602.5 224.2 601.0 224.5 599.5 224.8 598.0 223.3 596.5 224.4 595.0 224.4 593.5 224.1 592.0 224.2 590.5 223.1 589.0 223.0 587.5 223.4 586.0 223.1 584.5 222.6 583.0 225.9 581.5 224.1 580.0 225.7 578.5 224.8 577.0 226.9 575.5 227.9 574.0 226.1 572.5 225.9 571.0 224.3 569.5 225.1 568.0 222.5 566.5 222.2 565.0 222.4 563.5 222.1 562.0 221.7 560.5 221.9 559.0 221.9 557.5 222.6 556.0 222.7 554.5 222.8 553.0 222.9 551.5 224.1 550.0 224.6 548.5 222.9 547.0 225.9 545.5 225.2 544.0 226.3 542.5 225.5 541.0 226.0 539.5 224.2 538.0 226.1 536.5 224.4 535.0 224.7 533.5 224.9 532.0 223.0 530.5 225.6 529.0 224.7 527.5 223.4 526.0 225.1 524.5 225.4 523.0 224.1 521.5 225.2 520.0 224.1 518.5 224.1 517.0 226.6 515.5 224.5 514.0 225.6 512.5 225.4 511.0 223.6 509.5 224.1 508.0 223.9 506.5 222.9 505.0 223.5 503.5 222.6 502.0 222.6 500.5 222.5 499.0 222.7 497.5 222.3 496.0 221.8 494.5 221.8 493.0 222.0 491.5 222.2 490.0 222.5 488.5 222.0 487.0 221.7 485.5 221.6 484.0 222.1 482.5 222.0 481.0 221.9 479.5 221.9 478.0 222.3 476.5 221.8 475.0 222.1 473.5 222.3 472.0 221.9 470.5 222.0 469.0 221.8 467.5 222.0 466.0 222.3 464.5 222.2 463.0 223.2 461.5 222.5 460.0 223.0 458.5 223.9 457.0 223.8 455.5 223.9 454.0 224.1 452.5 223.2 451.0 222.9 449.5 223.8 448.0 224.9 446.5 224.2 445.0 224.8 443.5 224.0 442.0 223.4 440.5 222.8 439.0 223.2 437.5 223.3 436.0 222.9 434.5 222.6 433.0 222.4 431.5 222.6 430.0 222.2 428.5 222.0 427.0 222.3 425.5 222.0 424.0 222.4 422.5 221.7 421.0 222.0 419.5 221.7 418.0 222.3 416.5 221.8 415.0 222.1 413.5 221.7 412.0 221.8 410.5 222.0 409.0 222.1 407.5 221.6 406.0 221.9 404.5 222.0 403.0 221.7 401.5 221.9 400.0 222.1 398.5 221.7 397.0 222.2 395.5 222.2 394.0 222.1 392.5 221.9 391.0 222.0 389.5 222.2 388.0 222.0 386.5 222.2 385.0 222.4 383.5 222.2 382.0 221.7 380.5 221.8 379.0 221.8 377.5 221.9 376.0 221.9 374.5 222.2 373.0 222.0 371.5 222.2 370.0 222.2 368.5 221.8 367.0 222.2 365.5 222.3 364.0 221.9 362.5 222.0 361.0 222.0 359.5 222.2 358.0 222.0 356.5 222.3 355.0 221.7 353.5 221.6 352.0 222.0 350.5 222.2 349.0 222.1 347.5 222.0 346.0 221.7 344.5 222.0 343.0 221.7 341.5 222.0 340.0 222.1 338.5 221.8 337.0 222.4 335.5 221.9 334.0 221.9 332.5 222.0 331.0 221.7 329.5 221.9 328.0 222.1 326.5 221.9 325.0 222.3 323.5 222.2 322.0 221.7 320.5 221.8 319.0 221.7 317.5 221.6 316.0 221.6 314.5 222.1 313.0 222.2 311.5 222.0 310.0 222.2 308.5 222.2 307.0 221.7 305.5 221.9 304.0 222.0 302.5 222.1 301.0 222.6 299.5 222.6 298.0 222.2 296.5 223.2 295.0 222.9 293.5 224.4 292.0 224.1 290.5 226.5 289.0 224.9 287.5 224.0 286.0 226.5 284.5 225.6 283.0 226.3 281.5 226.5 280.0 224.7 278.5 224.3 277.0 224.2 275.5 223.7 274.0 223.2 272.5 222.7 271.0 221.9 269.5 222.8 268.0 222.8 266.5 221.8 265.0 221.9 263.5 222.0 262.0 222.2 260.5 222.2 259.0 222.2 257.5 221.8 256.0 222.0 254.5 221.8 253.0 221.7 251.5 222.0 250.0 221.8 248.5 221.8 247.0 221.8 245.5 222.1 244.0 222.2 242.5 221.8 241.0 222.1 239.5 221.5 238.0 221.5 236.5 221.5 235.0 221.5 233.5 221.5 232.0 221.5 230.5 221.5 229.0 221.5 227.5 221.5 226.0 221.5 224.5 221.5 223.0 221.5 221.5 221.5 220.0 221.5 218.5 221.5 217.0 221.5 215.5 221.5 214.0 221.5 212.5 221.5 211.0 221.5 209.5 221.5 208.0 221.5 206.5 221.5 205.0 221.5 203.5 221.5 202.0 221.5 200.5 221.5 199.0 221.5 197.5 221.5 196.0 221.5 194.5 221.5 193.0 221.5 191.5 221.5 190.0 221.5 188.5 221.5 187.0 221.5 185.5 221.5 184.0 221.5 182.5 221.5 181.0 221.5 179.5 221.5 178.0 221.5 176.5 221.5 175.0 221.5 173.5 221.5 172.0 221.5 170.5 221.5 169.0 221.5 167.5 221.5 166.0 221.5Z" fill="#8a909c"/></svg><div class="abs" style="left:1855.5px;top:151px;width:59px;height:20px;background:#fff;border:1px solid #d4d4d4"></div><div class="abs" style="left:1864px;top:160px;width:10px;height:2px;background:#444"></div><div class="abs" style="left:1868px;top:156px;width:2px;height:10px;background:#444"></div><div class="t" style="left:1881.5px;top:155.5px;font-size:12px;color:#444">背景</div><div class="abs" style="left:1855.5px;top:181px;width:59px;height:20px;background:#fff;border:1px solid #d4d4d4"></div><div class="abs" style="left:1864px;top:190px;width:10px;height:2px;background:#444"></div><div class="abs" style="left:1868px;top:186px;width:2px;height:10px;background:#444"></div><div class="t" style="left:1881.5px;top:185.5px;font-size:12px;color:#444">前景</div><div class="abs" style="left:1855.5px;top:211px;width:59px;height:20px;background:#fff;border:1px solid #d4d4d4"></div><div class="abs" style="left:1864px;top:220px;width:10px;height:2px;background:#444"></div><div class="abs" style="left:1868px;top:216px;width:2px;height:10px;background:#444"></div><div class="t" style="left:1881.5px;top:215.5px;font-size:12px;color:#444">音轨</div><div class="abs" style="left:1848px;top:217px;width:8px;height:8px;border-radius:50%;background:#ececec"></div><div class="abs" style="left:1777px;top:74px;width:1px;height:192px;background:#b8282c"></div><svg style="left:1767px;top:51px" width="21" height="26" viewBox="0 0 21 26"><path d="M2.5 2.5h16v14.5l-8 7.5-8-7.5z" fill="#3d86ea" stroke="#f2f0a0" stroke-width="2.6" stroke-linejoin="round"/><path d="M2.5 2.5h16v14.5l-8 7.5-8-7.5z" fill="#3d86ea" stroke="#2a3a58" stroke-width="0.9" stroke-linejoin="round"/><path d="M7.5 7v8M10.5 7v8M13.5 7v8" stroke="#15203a" stroke-width="1.1"/></svg></div></body></html>
